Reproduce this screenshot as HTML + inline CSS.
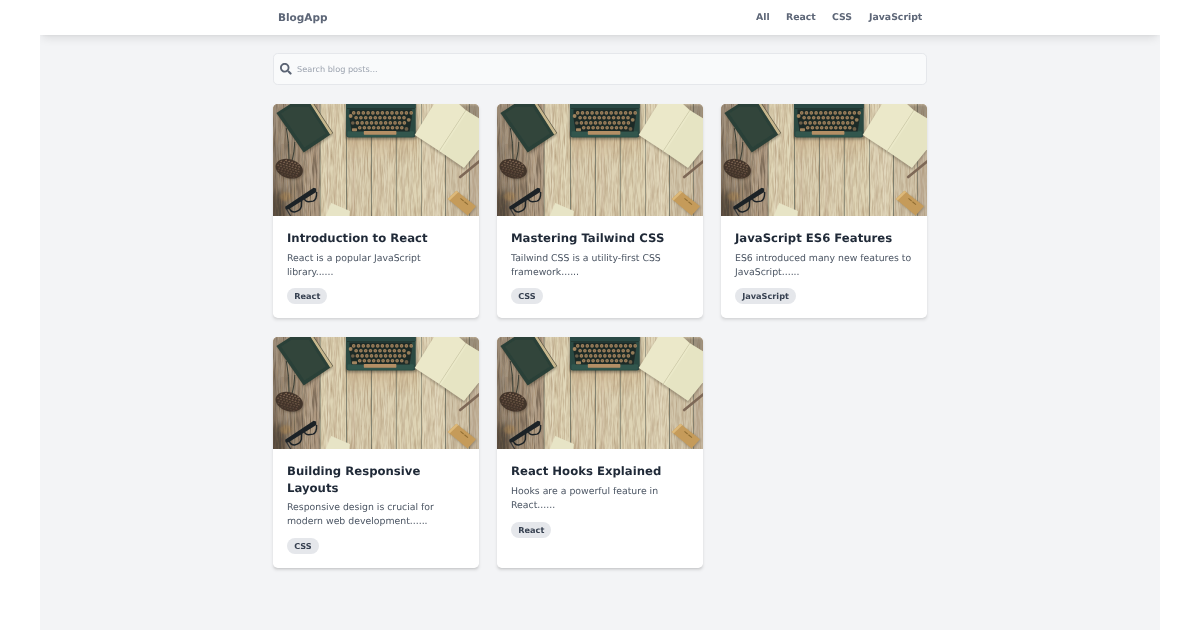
<!DOCTYPE html>
<html lang="en">
<head>
<meta charset="utf-8">
<title>BlogApp</title>
<style>
*{box-sizing:border-box;margin:0;padding:0}
html,body{width:1200px;height:630px;overflow:hidden;background:#fff}
body{font-family:"DejaVu Sans","Liberation Sans",sans-serif;position:relative;color:#1f2937;text-rendering:geometricPrecision}
.brand,.nav,.search span,.card h2,.card p,.tag{will-change:transform}
.bg{position:absolute;left:40px;top:0;width:1120px;height:630px;background:#f3f4f6;overflow:hidden}
.hdr{position:absolute;left:0;top:0;width:1120px;height:35px;background:#fff;box-shadow:0 5.8px 8.8px -1.75px rgba(0,0,0,.10),0 2.3px 3.5px -2.3px rgba(0,0,0,.10)}
.brand{position:absolute;left:238px;top:10.9px;font-size:10.51px;font-weight:700;color:#5d6677;line-height:14px}
.nav{position:absolute;top:11.7px;font-size:9.34px;font-weight:700;color:#5d6677;line-height:12px}
.search{position:absolute;left:273px;top:53px;width:654px;height:32px;background:#f9fafb;border:1px solid #e5e7eb;border-radius:4.7px}
.search span{position:absolute;left:23.2px;top:8.9px;font-size:8.18px;color:#9ca3af;line-height:12px}
.search svg{position:absolute;left:6.2px;top:9.3px}
.card{position:absolute;width:206px;background:#fff;border-radius:4.7px;overflow:hidden;box-shadow:0 2.3px 3.5px -0.6px rgba(0,0,0,.10),0 1.2px 2.3px -1.2px rgba(0,0,0,.10)}
.card .img{width:206px;height:112px;display:block;background:#b9a68c}
.card h2{position:absolute;left:14.4px;top:126.2px;font-size:11.68px;font-weight:700;color:#1f2937;line-height:16.5px;width:180px}
.card p{position:absolute;left:14.4px;font-size:9.34px;color:#4b5563;line-height:14px;width:180px}
.tag{position:absolute;left:14.3px;height:16px;border-radius:8px;background:#e5e7eb;font-size:8.18px;font-weight:700;color:#374151;line-height:16.6px;padding:0 7.2px}
</style>
</head>
<body>
<div class="bg">
<div class="hdr">
  <div class="brand">BlogApp</div>
  <div class="nav" style="left:716px">All</div>
  <div class="nav" style="left:746px">React</div>
  <div class="nav" style="left:792px">CSS</div>
  <div class="nav" style="left:828.5px">JavaScript</div>
</div>
</div>
<div class="search">
  <svg width="11.7" height="11.7" viewBox="0 0 512 512"><path fill="#5a6373" d="M505 442.7L405.3 343c-4.500-4.500-10.600-7-17-7H372c27.600-35.300 44-79.700 44-128C416 93.100 322.900 0 208 0S0 93.100 0 208s93.100 208 208 208c48.300 0 92.700-16.400 128-44v16.300c0 6.400 2.500 12.500 7 17l99.700 99.700c9.400 9.400 24.600 9.400 33.900 0l28.300-28.300c9.400-9.400 9.400-24.600.1-34zM208 336c-70.700 0-128-57.200-128-128 0-70.700 57.200-128 128-128 70.700 0 128 57.200 128 128 0 70.700-57.200 128-128 128z"/></svg>
  <span>Search blog posts...</span>
</div>

<div class="card" style="left:273px;top:104px;height:214px">
  <svg class="img" width="206" height="112" viewBox="0 0 206 112" preserveAspectRatio="none" aria-hidden="true"><filter id="g1" x="0" y="0" width="100%" height="100%" color-interpolation-filters="sRGB"><feTurbulence type="fractalNoise" baseFrequency="0.7 0.05" numOctaves="3" seed="4" result="n"/><feColorMatrix in="n" type="matrix" values="0 0 0 0 0.62  0 0 0 0 0.51  0 0 0 0 0.38  0.8 0.8 0 0 -0.66"/></filter><filter id="h1" x="0" y="0" width="100%" height="100%" color-interpolation-filters="sRGB"><feTurbulence type="fractalNoise" baseFrequency="0.6 0.04" numOctaves="3" seed="11" result="n"/><feColorMatrix in="n" type="matrix" values="0 0 0 0 0.33  0 0 0 0 0.27  0 0 0 0 0.21  1.1 1.1 0 0 -1.0"/></filter><filter id="b1" x="-5%" y="-5%" width="110%" height="110%"><feGaussianBlur stdDeviation="0.45"/></filter><filter id="s1" x="-20%" y="-20%" width="140%" height="140%"><feGaussianBlur stdDeviation="1.1"/></filter><filter id="t1" x="-60%" y="-60%" width="220%" height="220%"><feGaussianBlur stdDeviation="3.5"/></filter><g filter="url(#b1)"><rect x="-3.5" y="0" width="25.0" height="112" fill="#ad9e8a"/><rect x="21.3" y="0" width="26.0" height="112" fill="#bba891"/><rect x="47.1" y="0" width="26.5" height="112" fill="#dfd5b6"/><rect x="73.4" y="0" width="25.1" height="112" fill="#dacfb1"/><rect x="98.3" y="0" width="25.1" height="112" fill="#ddd2b4"/><rect x="123.2" y="0" width="25.0" height="112" fill="#ded4b5"/><rect x="148" y="0" width="24.6" height="112" fill="#e0d6b9"/><rect x="172.4" y="0" width="24.2" height="112" fill="#d2c6ab"/><rect x="196.4" y="0" width="24.8" height="112" fill="#c6b8a1"/><rect x="1" y="0" width="2.2" height="112" fill="#857563" opacity="0.4"/><rect x="11" y="0" width="1.5" height="112" fill="#7f6f5e" opacity="0.35"/><rect x="19" y="0" width="1.5" height="112" fill="#85745f" opacity="0.3"/><rect x="5" y="30" width="2" height="82" fill="#b3a48f" opacity="0.35"/><rect x="8" y="40" width="3" height="72" fill="#8f7b66" opacity="0.3"/><rect x="14" y="0" width="2" height="60" fill="#b5a691" opacity="0.35"/><rect x="17" y="50" width="2.5" height="62" fill="#93826e" opacity="0.3"/><rect x="21.5" y="40" width="8" height="72" fill="#a08e78" opacity="0.45"/><rect x="24" y="0" width="2.5" height="112" fill="#a99780" opacity="0.4"/><rect x="31" y="30" width="2.5" height="82" fill="#c9bba1" opacity="0.4"/><rect x="36" y="0" width="2" height="112" fill="#c5b69d" opacity="0.4"/><rect x="41" y="0" width="3" height="112" fill="#b39e86" opacity="0.4"/><rect x="53" y="0" width="4" height="112" fill="#e3dabf" opacity="0.5"/><rect x="61" y="0" width="2.5" height="112" fill="#cdb99e" opacity="0.4"/><rect x="67" y="20" width="2" height="92" fill="#e3dbc0" opacity="0.4"/><rect x="79" y="30" width="3" height="82" fill="#ccb9a0" opacity="0.4"/><rect x="87" y="0" width="3.5" height="112" fill="#e0d7bc" opacity="0.45"/><rect x="104" y="34" width="3" height="78" fill="#cfbda3" opacity="0.35"/><rect x="111" y="34" width="3" height="78" fill="#e1d8be" opacity="0.4"/><rect x="129" y="34" width="3" height="78" fill="#cfbea4" opacity="0.35"/><rect x="137" y="0" width="3" height="112" fill="#e2d9c0" opacity="0.4"/><rect x="154" y="40" width="3" height="72" fill="#cfbfa6" opacity="0.3"/><rect x="162" y="50" width="3" height="62" fill="#e2dac2" opacity="0.35"/><rect x="179" y="60" width="3" height="52" fill="#c5b69f" opacity="0.35"/><rect x="187" y="70" width="2.5" height="42" fill="#dcd2ba" opacity="0.35"/><rect x="199" y="50" width="3" height="62" fill="#bbad98" opacity="0.4"/><linearGradient id="d1" x1="0" y1="0" x2="0" y2="1"><stop offset="0" stop-color="#6b5a49" stop-opacity=".04"/><stop offset="1" stop-color="#6b5a49" stop-opacity=".26"/></linearGradient><rect x="0" y="0" width="30" height="112" fill="url(#d1)"/><rect x="30" y="0" width="17" height="112" fill="url(#d1)" opacity=".5"/><ellipse cx="4" cy="106" rx="9" ry="20" fill="#40392e" opacity=".85" filter="url(#t1)"/><ellipse cx="13" cy="92.5" rx="6" ry="4.5" fill="#b08a55" opacity=".6" filter="url(#s1)"/><ellipse cx="1" cy="70" rx="4" ry="40" fill="#5f5247" opacity=".5" filter="url(#t1)"/><linearGradient id="w1" x1="0" y1="0" x2="0" y2="1"><stop offset="0" stop-color="#bf9b6c" stop-opacity=".45"/><stop offset="1" stop-color="#bf9b6c" stop-opacity="0"/></linearGradient><rect x="72" y="28" width="72" height="30" fill="url(#w1)" filter="url(#s1)"/><rect x="0" y="0" width="206" height="112" filter="url(#g1)"/><rect x="0" y="0" width="47" height="112" filter="url(#h1)"/><rect x="21.00" y="0" width="0.6" height="112" fill="#3d4942" opacity="0.4"/><rect x="29.05" y="0" width="0.5" height="112" fill="#3d4942" opacity="0.25"/><rect x="46.80" y="0" width="0.6" height="112" fill="#3d4942" opacity="0.85"/><rect x="73.10" y="0" width="0.6" height="112" fill="#3d4942" opacity="0.9"/><rect x="98.00" y="0" width="0.6" height="112" fill="#3d4942" opacity="0.9"/><rect x="122.90" y="0" width="0.6" height="112" fill="#3d4942" opacity="0.85"/><rect x="148.10" y="0" width="0.6" height="112" fill="#3d4942" opacity="0.7"/><rect x="172.10" y="0" width="0.6" height="112" fill="#3d4942" opacity="0.9"/><rect x="196.10" y="0" width="0.6" height="112" fill="#3d4942" opacity="0.7"/><path d="M13.3 24 Q16.5 40 16 55" fill="none" stroke="#343a31" stroke-width="1" opacity=".95"/><path d="M21.8 38 Q21.5 48 19 57" fill="none" stroke="#343a31" stroke-width="1" opacity=".9"/><polygon points="5,11 19,2 39,1 60,31 32,50" fill="#3a3225" opacity=".35" filter="url(#s1)"/><polygon points="37.2,0 41.2,0 60.2,29 57,31.2" fill="#5b5645"/><polygon points="37.2,0 40.4,0 59.4,29 57,31" fill="#c8b88e"/><polygon points="3.4,8.9 17.3,0 37.6,0 57.2,30.8 30.7,48.4" fill="#2c4037"/><polygon points="8,9.5 18,3 36,3 53,29.5 31.5,43.5" fill="#32473d" opacity=".7"/><rect x="72.5" y="-2" width="71" height="37.5" rx="2.5" fill="#2a2f28" opacity=".4" filter="url(#s1)"/><rect x="73" y="-4" width="69.7" height="37.6" rx="3" fill="#2b4843"/><rect x="73" y="-3" width="69.7" height="7" fill="#2b4a44"/><rect x="74" y="4" width="67.7" height="1" fill="#223833"/><rect x="74.5" y="27.3" width="66.4" height="5.4" rx="1.2" fill="#31564e"/><path d="M76.5 5.6 H138.8 V14 L136.6 27.6 H78.6 L76.5 14 Z" fill="#1f2a27"/><rect x="90.8" y="27.1" width="32.6" height="3.6" rx=".6" fill="#b48f65"/><circle cx="80.7" cy="8.9" r="1.8" fill="#a0845f"/><circle cx="80.7" cy="8.9" r=".8" fill="#5c4a35" opacity=".5"/><circle cx="85.5" cy="8.9" r="1.8" fill="#a0845f"/><circle cx="85.5" cy="8.9" r=".8" fill="#5c4a35" opacity=".5"/><circle cx="90.3" cy="8.9" r="1.8" fill="#a0845f"/><circle cx="90.3" cy="8.9" r=".8" fill="#5c4a35" opacity=".5"/><circle cx="95.1" cy="8.9" r="1.8" fill="#a0845f"/><circle cx="95.1" cy="8.9" r=".8" fill="#5c4a35" opacity=".5"/><circle cx="99.9" cy="8.9" r="1.8" fill="#a0845f"/><circle cx="99.9" cy="8.9" r=".8" fill="#5c4a35" opacity=".5"/><circle cx="104.7" cy="8.9" r="1.8" fill="#a0845f"/><circle cx="104.7" cy="8.9" r=".8" fill="#5c4a35" opacity=".5"/><circle cx="109.4" cy="8.9" r="1.8" fill="#a0845f"/><circle cx="109.4" cy="8.9" r=".8" fill="#5c4a35" opacity=".5"/><circle cx="114.2" cy="8.9" r="1.8" fill="#a0845f"/><circle cx="114.2" cy="8.9" r=".8" fill="#5c4a35" opacity=".5"/><circle cx="119.0" cy="8.9" r="1.8" fill="#a0845f"/><circle cx="119.0" cy="8.9" r=".8" fill="#5c4a35" opacity=".5"/><circle cx="123.8" cy="8.9" r="1.8" fill="#a0845f"/><circle cx="123.8" cy="8.9" r=".8" fill="#5c4a35" opacity=".5"/><circle cx="128.6" cy="8.9" r="1.8" fill="#a0845f"/><circle cx="128.6" cy="8.9" r=".8" fill="#5c4a35" opacity=".5"/><circle cx="133.4" cy="8.9" r="1.8" fill="#a0845f"/><circle cx="133.4" cy="8.9" r=".8" fill="#5c4a35" opacity=".5"/><circle cx="138.2" cy="8.9" r="1.8" fill="#a0845f"/><circle cx="138.2" cy="8.9" r=".8" fill="#5c4a35" opacity=".5"/><circle cx="83.1" cy="13.8" r="1.8" fill="#a0845f"/><circle cx="83.1" cy="13.8" r=".8" fill="#5c4a35" opacity=".5"/><circle cx="87.9" cy="13.8" r="1.8" fill="#a0845f"/><circle cx="87.9" cy="13.8" r=".8" fill="#5c4a35" opacity=".5"/><circle cx="92.7" cy="13.8" r="1.8" fill="#a0845f"/><circle cx="92.7" cy="13.8" r=".8" fill="#5c4a35" opacity=".5"/><circle cx="97.5" cy="13.8" r="1.8" fill="#a0845f"/><circle cx="97.5" cy="13.8" r=".8" fill="#5c4a35" opacity=".5"/><circle cx="102.3" cy="13.8" r="1.8" fill="#a0845f"/><circle cx="102.3" cy="13.8" r=".8" fill="#5c4a35" opacity=".5"/><circle cx="107.0" cy="13.8" r="1.8" fill="#a0845f"/><circle cx="107.0" cy="13.8" r=".8" fill="#5c4a35" opacity=".5"/><circle cx="111.8" cy="13.8" r="1.8" fill="#a0845f"/><circle cx="111.8" cy="13.8" r=".8" fill="#5c4a35" opacity=".5"/><circle cx="116.6" cy="13.8" r="1.8" fill="#a0845f"/><circle cx="116.6" cy="13.8" r=".8" fill="#5c4a35" opacity=".5"/><circle cx="121.4" cy="13.8" r="1.8" fill="#a0845f"/><circle cx="121.4" cy="13.8" r=".8" fill="#5c4a35" opacity=".5"/><circle cx="126.2" cy="13.8" r="1.8" fill="#a0845f"/><circle cx="126.2" cy="13.8" r=".8" fill="#5c4a35" opacity=".5"/><circle cx="131.0" cy="13.8" r="1.8" fill="#a0845f"/><circle cx="131.0" cy="13.8" r=".8" fill="#5c4a35" opacity=".5"/><circle cx="84.4" cy="18.9" r="1.8" fill="#a0845f"/><circle cx="84.4" cy="18.9" r=".8" fill="#5c4a35" opacity=".5"/><circle cx="89.1" cy="18.9" r="1.8" fill="#a0845f"/><circle cx="89.1" cy="18.9" r=".8" fill="#5c4a35" opacity=".5"/><circle cx="93.8" cy="18.9" r="1.8" fill="#a0845f"/><circle cx="93.8" cy="18.9" r=".8" fill="#5c4a35" opacity=".5"/><circle cx="98.5" cy="18.9" r="1.8" fill="#a0845f"/><circle cx="98.5" cy="18.9" r=".8" fill="#5c4a35" opacity=".5"/><circle cx="103.2" cy="18.9" r="1.8" fill="#a0845f"/><circle cx="103.2" cy="18.9" r=".8" fill="#5c4a35" opacity=".5"/><circle cx="107.9" cy="18.9" r="1.8" fill="#a0845f"/><circle cx="107.9" cy="18.9" r=".8" fill="#5c4a35" opacity=".5"/><circle cx="112.6" cy="18.9" r="1.8" fill="#a0845f"/><circle cx="112.6" cy="18.9" r=".8" fill="#5c4a35" opacity=".5"/><circle cx="117.3" cy="18.9" r="1.8" fill="#a0845f"/><circle cx="117.3" cy="18.9" r=".8" fill="#5c4a35" opacity=".5"/><circle cx="122.0" cy="18.9" r="1.8" fill="#a0845f"/><circle cx="122.0" cy="18.9" r=".8" fill="#5c4a35" opacity=".5"/><circle cx="126.7" cy="18.9" r="1.8" fill="#a0845f"/><circle cx="126.7" cy="18.9" r=".8" fill="#5c4a35" opacity=".5"/><circle cx="131.4" cy="18.9" r="1.8" fill="#a0845f"/><circle cx="131.4" cy="18.9" r=".8" fill="#5c4a35" opacity=".5"/><circle cx="86.7" cy="23.8" r="1.8" fill="#a0845f"/><circle cx="86.7" cy="23.8" r=".8" fill="#5c4a35" opacity=".5"/><circle cx="91.4" cy="23.8" r="1.8" fill="#a0845f"/><circle cx="91.4" cy="23.8" r=".8" fill="#5c4a35" opacity=".5"/><circle cx="96.1" cy="23.8" r="1.8" fill="#a0845f"/><circle cx="96.1" cy="23.8" r=".8" fill="#5c4a35" opacity=".5"/><circle cx="100.7" cy="23.8" r="1.8" fill="#a0845f"/><circle cx="100.7" cy="23.8" r=".8" fill="#5c4a35" opacity=".5"/><circle cx="105.4" cy="23.8" r="1.8" fill="#a0845f"/><circle cx="105.4" cy="23.8" r=".8" fill="#5c4a35" opacity=".5"/><circle cx="110.1" cy="23.8" r="1.8" fill="#a0845f"/><circle cx="110.1" cy="23.8" r=".8" fill="#5c4a35" opacity=".5"/><circle cx="114.8" cy="23.8" r="1.8" fill="#a0845f"/><circle cx="114.8" cy="23.8" r=".8" fill="#5c4a35" opacity=".5"/><circle cx="119.5" cy="23.8" r="1.8" fill="#a0845f"/><circle cx="119.5" cy="23.8" r=".8" fill="#5c4a35" opacity=".5"/><circle cx="124.1" cy="23.8" r="1.8" fill="#a0845f"/><circle cx="124.1" cy="23.8" r=".8" fill="#5c4a35" opacity=".5"/><circle cx="128.8" cy="23.8" r="1.8" fill="#a0845f"/><circle cx="128.8" cy="23.8" r=".8" fill="#5c4a35" opacity=".5"/><circle cx="77.6" cy="12" r="1.9" fill="#a0845f"/><circle cx="135.7" cy="15.8" r="1.9" fill="#a0845f" opacity=".9"/><circle cx="79.8" cy="19" r="1.8" fill="#a0845f" opacity=".6"/><circle cx="133.5" cy="24.9" r="1.9" fill="#a0845f" opacity=".6"/><rect x="79" y="24.2" width="5" height="3" rx=".8" fill="#a0845f"/><polygon points="141.7,32 161,1 206,1 206,47 191,66 166,49" fill="#3a3225" opacity=".3" filter="url(#s1)"/><polygon points="141.7,31.1 160.9,0 186,0 192.9,6.2 166.2,47.1" fill="#ebe8c9"/><polygon points="192.9,6.2 206,14.2 206,45.3 191,64 166.2,47.1" fill="#e6e4c3"/><polygon points="192.9,6.2 194.6,7.3 167.8,48.2 166.2,47.1" fill="#efedd0" opacity=".5"/><line x1="192.9" y1="6.2" x2="166.2" y2="47.1" stroke="#c9c6a3" stroke-width=".5"/><line x1="187.2" y1="73" x2="207" y2="56.8" stroke="#7d6756" stroke-width="2.6" stroke-linecap="round"/><polygon points="184,88 176,96 195,113 204,103" fill="#3a3225" opacity=".3" filter="url(#s1)"/><polygon points="183.4,86.7 174.8,95.1 194.6,111.6 203,102.2" fill="#c59b5a"/><polygon points="183.4,86.7 174.8,95.1 176.6,96.6 185.2,88.2" fill="#ddb97a"/><g transform="translate(186.8,95.2) rotate(40)" fill="#7a5a22" opacity=".7"><rect x="0" y="-1.6" width="4.2" height="1.1"/><rect x="5.2" y="-1.6" width="4.6" height="1.1"/></g><ellipse cx="17" cy="66" rx="14" ry="9" fill="#2a2018" opacity=".35" filter="url(#s1)" transform="rotate(18 17 66)"/><ellipse cx="16.2" cy="64.7" rx="14" ry="9.4" fill="#43342a" transform="rotate(17 16.2 64.7)"/><g transform="rotate(17 16.2 64.7)"><path d="M9.5 58.3 L10.9 56.7 L12.2 58.3 Z" fill="#8f745d" opacity="0.85"/><path d="M12.6 58.3 L14.0 56.7 L15.3 58.3 Z" fill="#8f745d" opacity="0.85"/><path d="M15.7 58.3 L17.1 56.7 L18.4 58.3 Z" fill="#8f745d" opacity="0.85"/><path d="M18.8 58.3 L20.2 56.7 L21.5 58.3 Z" fill="#8f745d" opacity="0.85"/><path d="M21.9 58.3 L23.3 56.7 L24.6 58.3 Z" fill="#8f745d" opacity="0.85"/><path d="M5.1 60.6 L6.5 59.0 L7.8 60.6 Z" fill="#8f745d" opacity="0.75"/><path d="M8.2 60.6 L9.6 59.0 L10.9 60.6 Z" fill="#8f745d" opacity="0.75"/><path d="M11.3 60.6 L12.7 59.0 L14.0 60.6 Z" fill="#8f745d" opacity="0.75"/><path d="M14.4 60.6 L15.8 59.0 L17.1 60.6 Z" fill="#8f745d" opacity="0.75"/><path d="M17.5 60.6 L18.9 59.0 L20.2 60.6 Z" fill="#8f745d" opacity="0.75"/><path d="M20.6 60.6 L22.0 59.0 L23.3 60.6 Z" fill="#8f745d" opacity="0.75"/><path d="M23.7 60.6 L25.1 59.0 L26.4 60.6 Z" fill="#8f745d" opacity="0.75"/><path d="M5.2 63.0 L6.6 61.4 L7.9 63.0 Z" fill="#8f745d" opacity="0.65"/><path d="M8.3 63.0 L9.7 61.4 L11.0 63.0 Z" fill="#8f745d" opacity="0.65"/><path d="M11.4 63.0 L12.8 61.4 L14.1 63.0 Z" fill="#8f745d" opacity="0.65"/><path d="M14.5 63.0 L15.9 61.4 L17.2 63.0 Z" fill="#8f745d" opacity="0.65"/><path d="M17.6 63.0 L19.0 61.4 L20.3 63.0 Z" fill="#8f745d" opacity="0.65"/><path d="M20.7 63.0 L22.1 61.4 L23.4 63.0 Z" fill="#8f745d" opacity="0.65"/><path d="M23.8 63.0 L25.2 61.4 L26.5 63.0 Z" fill="#8f745d" opacity="0.65"/><path d="M3.2 65.3 L4.6 63.7 L5.9 65.3 Z" fill="#8f745d" opacity="0.55"/><path d="M6.3 65.3 L7.7 63.7 L9.0 65.3 Z" fill="#8f745d" opacity="0.55"/><path d="M9.5 65.3 L10.8 63.7 L12.2 65.3 Z" fill="#8f745d" opacity="0.55"/><path d="M12.6 65.3 L13.9 63.7 L15.2 65.3 Z" fill="#8f745d" opacity="0.55"/><path d="M15.7 65.3 L17.0 63.7 L18.4 65.3 Z" fill="#8f745d" opacity="0.55"/><path d="M18.8 65.3 L20.1 63.7 L21.5 65.3 Z" fill="#8f745d" opacity="0.55"/><path d="M21.9 65.3 L23.2 63.7 L24.6 65.3 Z" fill="#8f745d" opacity="0.55"/><path d="M24.9 65.3 L26.3 63.7 L27.6 65.3 Z" fill="#8f745d" opacity="0.55"/><path d="M5.2 67.6 L6.6 66.0 L7.9 67.6 Z" fill="#8f745d" opacity="0.45"/><path d="M8.3 67.6 L9.7 66.0 L11.0 67.6 Z" fill="#8f745d" opacity="0.45"/><path d="M11.4 67.6 L12.8 66.0 L14.1 67.6 Z" fill="#8f745d" opacity="0.45"/><path d="M14.5 67.6 L15.9 66.0 L17.2 67.6 Z" fill="#8f745d" opacity="0.45"/><path d="M17.6 67.6 L19.0 66.0 L20.3 67.6 Z" fill="#8f745d" opacity="0.45"/><path d="M20.7 67.6 L22.1 66.0 L23.4 67.6 Z" fill="#8f745d" opacity="0.45"/><path d="M23.8 67.6 L25.2 66.0 L26.5 67.6 Z" fill="#8f745d" opacity="0.45"/><path d="M5.1 70.0 L6.5 68.4 L7.8 70.0 Z" fill="#8f745d" opacity="0.35"/><path d="M8.2 70.0 L9.6 68.4 L10.9 70.0 Z" fill="#8f745d" opacity="0.35"/><path d="M11.3 70.0 L12.7 68.4 L14.0 70.0 Z" fill="#8f745d" opacity="0.35"/><path d="M14.4 70.0 L15.8 68.4 L17.1 70.0 Z" fill="#8f745d" opacity="0.35"/><path d="M17.5 70.0 L18.9 68.4 L20.2 70.0 Z" fill="#8f745d" opacity="0.35"/><path d="M20.6 70.0 L22.0 68.4 L23.3 70.0 Z" fill="#8f745d" opacity="0.35"/><path d="M23.7 70.0 L25.1 68.4 L26.4 70.0 Z" fill="#8f745d" opacity="0.35"/><path d="M9.5 72.3 L10.9 70.8 L12.2 72.3 Z" fill="#8f745d" opacity="0.25"/><path d="M12.6 72.3 L14.0 70.8 L15.3 72.3 Z" fill="#8f745d" opacity="0.25"/><path d="M15.7 72.3 L17.1 70.8 L18.4 72.3 Z" fill="#8f745d" opacity="0.25"/><path d="M18.8 72.3 L20.2 70.8 L21.5 72.3 Z" fill="#8f745d" opacity="0.25"/><path d="M21.9 72.3 L23.3 70.8 L24.6 72.3 Z" fill="#8f745d" opacity="0.25"/></g><polygon points="12.1,102.8 40.6,83.7 43.1,84.6 43.3,88 15.2,105.5 12.6,105.2" fill="#1c2327"/><g fill="none" stroke="#1c2327" stroke-linejoin="round"><path d="M31.2 93 Q31.4 97.6 35.5 97.7 L40 97.1 Q43.9 95.8 43.6 88" stroke-width="1.45"/><path d="M16.4 104 Q17.4 108 21.6 108 Q27.4 106.8 28.4 102.4 L28.5 96.5" stroke-width="1.45"/><path d="M13.2 104.5 L17.6 112" stroke-width="1.3" opacity=".75"/></g><polygon points="58.2,99.1 76.9,107.1 76.4,113 52.4,113" fill="#e7e4c6"/></g></svg>
  <h2>Introduction to React</h2>
  <p style="top:147.9px">React is a popular JavaScript library......</p>
  <div class="tag" style="top:184.3px">React</div>
</div>
<div class="card" style="left:497px;top:104px;height:214px">
  <svg class="img" width="206" height="112" viewBox="0 0 206 112" preserveAspectRatio="none" aria-hidden="true"><filter id="g2" x="0" y="0" width="100%" height="100%" color-interpolation-filters="sRGB"><feTurbulence type="fractalNoise" baseFrequency="0.7 0.05" numOctaves="3" seed="4" result="n"/><feColorMatrix in="n" type="matrix" values="0 0 0 0 0.62  0 0 0 0 0.51  0 0 0 0 0.38  0.8 0.8 0 0 -0.66"/></filter><filter id="h2" x="0" y="0" width="100%" height="100%" color-interpolation-filters="sRGB"><feTurbulence type="fractalNoise" baseFrequency="0.6 0.04" numOctaves="3" seed="11" result="n"/><feColorMatrix in="n" type="matrix" values="0 0 0 0 0.33  0 0 0 0 0.27  0 0 0 0 0.21  1.1 1.1 0 0 -1.0"/></filter><filter id="b2" x="-5%" y="-5%" width="110%" height="110%"><feGaussianBlur stdDeviation="0.45"/></filter><filter id="s2" x="-20%" y="-20%" width="140%" height="140%"><feGaussianBlur stdDeviation="1.1"/></filter><filter id="t2" x="-60%" y="-60%" width="220%" height="220%"><feGaussianBlur stdDeviation="3.5"/></filter><g filter="url(#b2)"><rect x="-3.5" y="0" width="25.0" height="112" fill="#ad9e8a"/><rect x="21.3" y="0" width="26.0" height="112" fill="#bba891"/><rect x="47.1" y="0" width="26.5" height="112" fill="#dfd5b6"/><rect x="73.4" y="0" width="25.1" height="112" fill="#dacfb1"/><rect x="98.3" y="0" width="25.1" height="112" fill="#ddd2b4"/><rect x="123.2" y="0" width="25.0" height="112" fill="#ded4b5"/><rect x="148" y="0" width="24.6" height="112" fill="#e0d6b9"/><rect x="172.4" y="0" width="24.2" height="112" fill="#d2c6ab"/><rect x="196.4" y="0" width="24.8" height="112" fill="#c6b8a1"/><rect x="1" y="0" width="2.2" height="112" fill="#857563" opacity="0.4"/><rect x="11" y="0" width="1.5" height="112" fill="#7f6f5e" opacity="0.35"/><rect x="19" y="0" width="1.5" height="112" fill="#85745f" opacity="0.3"/><rect x="5" y="30" width="2" height="82" fill="#b3a48f" opacity="0.35"/><rect x="8" y="40" width="3" height="72" fill="#8f7b66" opacity="0.3"/><rect x="14" y="0" width="2" height="60" fill="#b5a691" opacity="0.35"/><rect x="17" y="50" width="2.5" height="62" fill="#93826e" opacity="0.3"/><rect x="21.5" y="40" width="8" height="72" fill="#a08e78" opacity="0.45"/><rect x="24" y="0" width="2.5" height="112" fill="#a99780" opacity="0.4"/><rect x="31" y="30" width="2.5" height="82" fill="#c9bba1" opacity="0.4"/><rect x="36" y="0" width="2" height="112" fill="#c5b69d" opacity="0.4"/><rect x="41" y="0" width="3" height="112" fill="#b39e86" opacity="0.4"/><rect x="53" y="0" width="4" height="112" fill="#e3dabf" opacity="0.5"/><rect x="61" y="0" width="2.5" height="112" fill="#cdb99e" opacity="0.4"/><rect x="67" y="20" width="2" height="92" fill="#e3dbc0" opacity="0.4"/><rect x="79" y="30" width="3" height="82" fill="#ccb9a0" opacity="0.4"/><rect x="87" y="0" width="3.5" height="112" fill="#e0d7bc" opacity="0.45"/><rect x="104" y="34" width="3" height="78" fill="#cfbda3" opacity="0.35"/><rect x="111" y="34" width="3" height="78" fill="#e1d8be" opacity="0.4"/><rect x="129" y="34" width="3" height="78" fill="#cfbea4" opacity="0.35"/><rect x="137" y="0" width="3" height="112" fill="#e2d9c0" opacity="0.4"/><rect x="154" y="40" width="3" height="72" fill="#cfbfa6" opacity="0.3"/><rect x="162" y="50" width="3" height="62" fill="#e2dac2" opacity="0.35"/><rect x="179" y="60" width="3" height="52" fill="#c5b69f" opacity="0.35"/><rect x="187" y="70" width="2.5" height="42" fill="#dcd2ba" opacity="0.35"/><rect x="199" y="50" width="3" height="62" fill="#bbad98" opacity="0.4"/><linearGradient id="d2" x1="0" y1="0" x2="0" y2="1"><stop offset="0" stop-color="#6b5a49" stop-opacity=".04"/><stop offset="1" stop-color="#6b5a49" stop-opacity=".26"/></linearGradient><rect x="0" y="0" width="30" height="112" fill="url(#d2)"/><rect x="30" y="0" width="17" height="112" fill="url(#d2)" opacity=".5"/><ellipse cx="4" cy="106" rx="9" ry="20" fill="#40392e" opacity=".85" filter="url(#t2)"/><ellipse cx="13" cy="92.5" rx="6" ry="4.5" fill="#b08a55" opacity=".6" filter="url(#s2)"/><ellipse cx="1" cy="70" rx="4" ry="40" fill="#5f5247" opacity=".5" filter="url(#t2)"/><linearGradient id="w2" x1="0" y1="0" x2="0" y2="1"><stop offset="0" stop-color="#bf9b6c" stop-opacity=".45"/><stop offset="1" stop-color="#bf9b6c" stop-opacity="0"/></linearGradient><rect x="72" y="28" width="72" height="30" fill="url(#w2)" filter="url(#s2)"/><rect x="0" y="0" width="206" height="112" filter="url(#g2)"/><rect x="0" y="0" width="47" height="112" filter="url(#h2)"/><rect x="21.00" y="0" width="0.6" height="112" fill="#3d4942" opacity="0.4"/><rect x="29.05" y="0" width="0.5" height="112" fill="#3d4942" opacity="0.25"/><rect x="46.80" y="0" width="0.6" height="112" fill="#3d4942" opacity="0.85"/><rect x="73.10" y="0" width="0.6" height="112" fill="#3d4942" opacity="0.9"/><rect x="98.00" y="0" width="0.6" height="112" fill="#3d4942" opacity="0.9"/><rect x="122.90" y="0" width="0.6" height="112" fill="#3d4942" opacity="0.85"/><rect x="148.10" y="0" width="0.6" height="112" fill="#3d4942" opacity="0.7"/><rect x="172.10" y="0" width="0.6" height="112" fill="#3d4942" opacity="0.9"/><rect x="196.10" y="0" width="0.6" height="112" fill="#3d4942" opacity="0.7"/><path d="M13.3 24 Q16.5 40 16 55" fill="none" stroke="#343a31" stroke-width="1" opacity=".95"/><path d="M21.8 38 Q21.5 48 19 57" fill="none" stroke="#343a31" stroke-width="1" opacity=".9"/><polygon points="5,11 19,2 39,1 60,31 32,50" fill="#3a3225" opacity=".35" filter="url(#s2)"/><polygon points="37.2,0 41.2,0 60.2,29 57,31.2" fill="#5b5645"/><polygon points="37.2,0 40.4,0 59.4,29 57,31" fill="#c8b88e"/><polygon points="3.4,8.9 17.3,0 37.6,0 57.2,30.8 30.7,48.4" fill="#2c4037"/><polygon points="8,9.5 18,3 36,3 53,29.5 31.5,43.5" fill="#32473d" opacity=".7"/><rect x="72.5" y="-2" width="71" height="37.5" rx="2.5" fill="#2a2f28" opacity=".4" filter="url(#s2)"/><rect x="73" y="-4" width="69.7" height="37.6" rx="3" fill="#2b4843"/><rect x="73" y="-3" width="69.7" height="7" fill="#2b4a44"/><rect x="74" y="4" width="67.7" height="1" fill="#223833"/><rect x="74.5" y="27.3" width="66.4" height="5.4" rx="1.2" fill="#31564e"/><path d="M76.5 5.6 H138.8 V14 L136.6 27.6 H78.6 L76.5 14 Z" fill="#1f2a27"/><rect x="90.8" y="27.1" width="32.6" height="3.6" rx=".6" fill="#b48f65"/><circle cx="80.7" cy="8.9" r="1.8" fill="#a0845f"/><circle cx="80.7" cy="8.9" r=".8" fill="#5c4a35" opacity=".5"/><circle cx="85.5" cy="8.9" r="1.8" fill="#a0845f"/><circle cx="85.5" cy="8.9" r=".8" fill="#5c4a35" opacity=".5"/><circle cx="90.3" cy="8.9" r="1.8" fill="#a0845f"/><circle cx="90.3" cy="8.9" r=".8" fill="#5c4a35" opacity=".5"/><circle cx="95.1" cy="8.9" r="1.8" fill="#a0845f"/><circle cx="95.1" cy="8.9" r=".8" fill="#5c4a35" opacity=".5"/><circle cx="99.9" cy="8.9" r="1.8" fill="#a0845f"/><circle cx="99.9" cy="8.9" r=".8" fill="#5c4a35" opacity=".5"/><circle cx="104.7" cy="8.9" r="1.8" fill="#a0845f"/><circle cx="104.7" cy="8.9" r=".8" fill="#5c4a35" opacity=".5"/><circle cx="109.4" cy="8.9" r="1.8" fill="#a0845f"/><circle cx="109.4" cy="8.9" r=".8" fill="#5c4a35" opacity=".5"/><circle cx="114.2" cy="8.9" r="1.8" fill="#a0845f"/><circle cx="114.2" cy="8.9" r=".8" fill="#5c4a35" opacity=".5"/><circle cx="119.0" cy="8.9" r="1.8" fill="#a0845f"/><circle cx="119.0" cy="8.9" r=".8" fill="#5c4a35" opacity=".5"/><circle cx="123.8" cy="8.9" r="1.8" fill="#a0845f"/><circle cx="123.8" cy="8.9" r=".8" fill="#5c4a35" opacity=".5"/><circle cx="128.6" cy="8.9" r="1.8" fill="#a0845f"/><circle cx="128.6" cy="8.9" r=".8" fill="#5c4a35" opacity=".5"/><circle cx="133.4" cy="8.9" r="1.8" fill="#a0845f"/><circle cx="133.4" cy="8.9" r=".8" fill="#5c4a35" opacity=".5"/><circle cx="138.2" cy="8.9" r="1.8" fill="#a0845f"/><circle cx="138.2" cy="8.9" r=".8" fill="#5c4a35" opacity=".5"/><circle cx="83.1" cy="13.8" r="1.8" fill="#a0845f"/><circle cx="83.1" cy="13.8" r=".8" fill="#5c4a35" opacity=".5"/><circle cx="87.9" cy="13.8" r="1.8" fill="#a0845f"/><circle cx="87.9" cy="13.8" r=".8" fill="#5c4a35" opacity=".5"/><circle cx="92.7" cy="13.8" r="1.8" fill="#a0845f"/><circle cx="92.7" cy="13.8" r=".8" fill="#5c4a35" opacity=".5"/><circle cx="97.5" cy="13.8" r="1.8" fill="#a0845f"/><circle cx="97.5" cy="13.8" r=".8" fill="#5c4a35" opacity=".5"/><circle cx="102.3" cy="13.8" r="1.8" fill="#a0845f"/><circle cx="102.3" cy="13.8" r=".8" fill="#5c4a35" opacity=".5"/><circle cx="107.0" cy="13.8" r="1.8" fill="#a0845f"/><circle cx="107.0" cy="13.8" r=".8" fill="#5c4a35" opacity=".5"/><circle cx="111.8" cy="13.8" r="1.8" fill="#a0845f"/><circle cx="111.8" cy="13.8" r=".8" fill="#5c4a35" opacity=".5"/><circle cx="116.6" cy="13.8" r="1.8" fill="#a0845f"/><circle cx="116.6" cy="13.8" r=".8" fill="#5c4a35" opacity=".5"/><circle cx="121.4" cy="13.8" r="1.8" fill="#a0845f"/><circle cx="121.4" cy="13.8" r=".8" fill="#5c4a35" opacity=".5"/><circle cx="126.2" cy="13.8" r="1.8" fill="#a0845f"/><circle cx="126.2" cy="13.8" r=".8" fill="#5c4a35" opacity=".5"/><circle cx="131.0" cy="13.8" r="1.8" fill="#a0845f"/><circle cx="131.0" cy="13.8" r=".8" fill="#5c4a35" opacity=".5"/><circle cx="84.4" cy="18.9" r="1.8" fill="#a0845f"/><circle cx="84.4" cy="18.9" r=".8" fill="#5c4a35" opacity=".5"/><circle cx="89.1" cy="18.9" r="1.8" fill="#a0845f"/><circle cx="89.1" cy="18.9" r=".8" fill="#5c4a35" opacity=".5"/><circle cx="93.8" cy="18.9" r="1.8" fill="#a0845f"/><circle cx="93.8" cy="18.9" r=".8" fill="#5c4a35" opacity=".5"/><circle cx="98.5" cy="18.9" r="1.8" fill="#a0845f"/><circle cx="98.5" cy="18.9" r=".8" fill="#5c4a35" opacity=".5"/><circle cx="103.2" cy="18.9" r="1.8" fill="#a0845f"/><circle cx="103.2" cy="18.9" r=".8" fill="#5c4a35" opacity=".5"/><circle cx="107.9" cy="18.9" r="1.8" fill="#a0845f"/><circle cx="107.9" cy="18.9" r=".8" fill="#5c4a35" opacity=".5"/><circle cx="112.6" cy="18.9" r="1.8" fill="#a0845f"/><circle cx="112.6" cy="18.9" r=".8" fill="#5c4a35" opacity=".5"/><circle cx="117.3" cy="18.9" r="1.8" fill="#a0845f"/><circle cx="117.3" cy="18.9" r=".8" fill="#5c4a35" opacity=".5"/><circle cx="122.0" cy="18.9" r="1.8" fill="#a0845f"/><circle cx="122.0" cy="18.9" r=".8" fill="#5c4a35" opacity=".5"/><circle cx="126.7" cy="18.9" r="1.8" fill="#a0845f"/><circle cx="126.7" cy="18.9" r=".8" fill="#5c4a35" opacity=".5"/><circle cx="131.4" cy="18.9" r="1.8" fill="#a0845f"/><circle cx="131.4" cy="18.9" r=".8" fill="#5c4a35" opacity=".5"/><circle cx="86.7" cy="23.8" r="1.8" fill="#a0845f"/><circle cx="86.7" cy="23.8" r=".8" fill="#5c4a35" opacity=".5"/><circle cx="91.4" cy="23.8" r="1.8" fill="#a0845f"/><circle cx="91.4" cy="23.8" r=".8" fill="#5c4a35" opacity=".5"/><circle cx="96.1" cy="23.8" r="1.8" fill="#a0845f"/><circle cx="96.1" cy="23.8" r=".8" fill="#5c4a35" opacity=".5"/><circle cx="100.7" cy="23.8" r="1.8" fill="#a0845f"/><circle cx="100.7" cy="23.8" r=".8" fill="#5c4a35" opacity=".5"/><circle cx="105.4" cy="23.8" r="1.8" fill="#a0845f"/><circle cx="105.4" cy="23.8" r=".8" fill="#5c4a35" opacity=".5"/><circle cx="110.1" cy="23.8" r="1.8" fill="#a0845f"/><circle cx="110.1" cy="23.8" r=".8" fill="#5c4a35" opacity=".5"/><circle cx="114.8" cy="23.8" r="1.8" fill="#a0845f"/><circle cx="114.8" cy="23.8" r=".8" fill="#5c4a35" opacity=".5"/><circle cx="119.5" cy="23.8" r="1.8" fill="#a0845f"/><circle cx="119.5" cy="23.8" r=".8" fill="#5c4a35" opacity=".5"/><circle cx="124.1" cy="23.8" r="1.8" fill="#a0845f"/><circle cx="124.1" cy="23.8" r=".8" fill="#5c4a35" opacity=".5"/><circle cx="128.8" cy="23.8" r="1.8" fill="#a0845f"/><circle cx="128.8" cy="23.8" r=".8" fill="#5c4a35" opacity=".5"/><circle cx="77.6" cy="12" r="1.9" fill="#a0845f"/><circle cx="135.7" cy="15.8" r="1.9" fill="#a0845f" opacity=".9"/><circle cx="79.8" cy="19" r="1.8" fill="#a0845f" opacity=".6"/><circle cx="133.5" cy="24.9" r="1.9" fill="#a0845f" opacity=".6"/><rect x="79" y="24.2" width="5" height="3" rx=".8" fill="#a0845f"/><polygon points="141.7,32 161,1 206,1 206,47 191,66 166,49" fill="#3a3225" opacity=".3" filter="url(#s2)"/><polygon points="141.7,31.1 160.9,0 186,0 192.9,6.2 166.2,47.1" fill="#ebe8c9"/><polygon points="192.9,6.2 206,14.2 206,45.3 191,64 166.2,47.1" fill="#e6e4c3"/><polygon points="192.9,6.2 194.6,7.3 167.8,48.2 166.2,47.1" fill="#efedd0" opacity=".5"/><line x1="192.9" y1="6.2" x2="166.2" y2="47.1" stroke="#c9c6a3" stroke-width=".5"/><line x1="187.2" y1="73" x2="207" y2="56.8" stroke="#7d6756" stroke-width="2.6" stroke-linecap="round"/><polygon points="184,88 176,96 195,113 204,103" fill="#3a3225" opacity=".3" filter="url(#s2)"/><polygon points="183.4,86.7 174.8,95.1 194.6,111.6 203,102.2" fill="#c59b5a"/><polygon points="183.4,86.7 174.8,95.1 176.6,96.6 185.2,88.2" fill="#ddb97a"/><g transform="translate(186.8,95.2) rotate(40)" fill="#7a5a22" opacity=".7"><rect x="0" y="-1.6" width="4.2" height="1.1"/><rect x="5.2" y="-1.6" width="4.6" height="1.1"/></g><ellipse cx="17" cy="66" rx="14" ry="9" fill="#2a2018" opacity=".35" filter="url(#s2)" transform="rotate(18 17 66)"/><ellipse cx="16.2" cy="64.7" rx="14" ry="9.4" fill="#43342a" transform="rotate(17 16.2 64.7)"/><g transform="rotate(17 16.2 64.7)"><path d="M9.5 58.3 L10.9 56.7 L12.2 58.3 Z" fill="#8f745d" opacity="0.85"/><path d="M12.6 58.3 L14.0 56.7 L15.3 58.3 Z" fill="#8f745d" opacity="0.85"/><path d="M15.7 58.3 L17.1 56.7 L18.4 58.3 Z" fill="#8f745d" opacity="0.85"/><path d="M18.8 58.3 L20.2 56.7 L21.5 58.3 Z" fill="#8f745d" opacity="0.85"/><path d="M21.9 58.3 L23.3 56.7 L24.6 58.3 Z" fill="#8f745d" opacity="0.85"/><path d="M5.1 60.6 L6.5 59.0 L7.8 60.6 Z" fill="#8f745d" opacity="0.75"/><path d="M8.2 60.6 L9.6 59.0 L10.9 60.6 Z" fill="#8f745d" opacity="0.75"/><path d="M11.3 60.6 L12.7 59.0 L14.0 60.6 Z" fill="#8f745d" opacity="0.75"/><path d="M14.4 60.6 L15.8 59.0 L17.1 60.6 Z" fill="#8f745d" opacity="0.75"/><path d="M17.5 60.6 L18.9 59.0 L20.2 60.6 Z" fill="#8f745d" opacity="0.75"/><path d="M20.6 60.6 L22.0 59.0 L23.3 60.6 Z" fill="#8f745d" opacity="0.75"/><path d="M23.7 60.6 L25.1 59.0 L26.4 60.6 Z" fill="#8f745d" opacity="0.75"/><path d="M5.2 63.0 L6.6 61.4 L7.9 63.0 Z" fill="#8f745d" opacity="0.65"/><path d="M8.3 63.0 L9.7 61.4 L11.0 63.0 Z" fill="#8f745d" opacity="0.65"/><path d="M11.4 63.0 L12.8 61.4 L14.1 63.0 Z" fill="#8f745d" opacity="0.65"/><path d="M14.5 63.0 L15.9 61.4 L17.2 63.0 Z" fill="#8f745d" opacity="0.65"/><path d="M17.6 63.0 L19.0 61.4 L20.3 63.0 Z" fill="#8f745d" opacity="0.65"/><path d="M20.7 63.0 L22.1 61.4 L23.4 63.0 Z" fill="#8f745d" opacity="0.65"/><path d="M23.8 63.0 L25.2 61.4 L26.5 63.0 Z" fill="#8f745d" opacity="0.65"/><path d="M3.2 65.3 L4.6 63.7 L5.9 65.3 Z" fill="#8f745d" opacity="0.55"/><path d="M6.3 65.3 L7.7 63.7 L9.0 65.3 Z" fill="#8f745d" opacity="0.55"/><path d="M9.5 65.3 L10.8 63.7 L12.2 65.3 Z" fill="#8f745d" opacity="0.55"/><path d="M12.6 65.3 L13.9 63.7 L15.2 65.3 Z" fill="#8f745d" opacity="0.55"/><path d="M15.7 65.3 L17.0 63.7 L18.4 65.3 Z" fill="#8f745d" opacity="0.55"/><path d="M18.8 65.3 L20.1 63.7 L21.5 65.3 Z" fill="#8f745d" opacity="0.55"/><path d="M21.9 65.3 L23.2 63.7 L24.6 65.3 Z" fill="#8f745d" opacity="0.55"/><path d="M24.9 65.3 L26.3 63.7 L27.6 65.3 Z" fill="#8f745d" opacity="0.55"/><path d="M5.2 67.6 L6.6 66.0 L7.9 67.6 Z" fill="#8f745d" opacity="0.45"/><path d="M8.3 67.6 L9.7 66.0 L11.0 67.6 Z" fill="#8f745d" opacity="0.45"/><path d="M11.4 67.6 L12.8 66.0 L14.1 67.6 Z" fill="#8f745d" opacity="0.45"/><path d="M14.5 67.6 L15.9 66.0 L17.2 67.6 Z" fill="#8f745d" opacity="0.45"/><path d="M17.6 67.6 L19.0 66.0 L20.3 67.6 Z" fill="#8f745d" opacity="0.45"/><path d="M20.7 67.6 L22.1 66.0 L23.4 67.6 Z" fill="#8f745d" opacity="0.45"/><path d="M23.8 67.6 L25.2 66.0 L26.5 67.6 Z" fill="#8f745d" opacity="0.45"/><path d="M5.1 70.0 L6.5 68.4 L7.8 70.0 Z" fill="#8f745d" opacity="0.35"/><path d="M8.2 70.0 L9.6 68.4 L10.9 70.0 Z" fill="#8f745d" opacity="0.35"/><path d="M11.3 70.0 L12.7 68.4 L14.0 70.0 Z" fill="#8f745d" opacity="0.35"/><path d="M14.4 70.0 L15.8 68.4 L17.1 70.0 Z" fill="#8f745d" opacity="0.35"/><path d="M17.5 70.0 L18.9 68.4 L20.2 70.0 Z" fill="#8f745d" opacity="0.35"/><path d="M20.6 70.0 L22.0 68.4 L23.3 70.0 Z" fill="#8f745d" opacity="0.35"/><path d="M23.7 70.0 L25.1 68.4 L26.4 70.0 Z" fill="#8f745d" opacity="0.35"/><path d="M9.5 72.3 L10.9 70.8 L12.2 72.3 Z" fill="#8f745d" opacity="0.25"/><path d="M12.6 72.3 L14.0 70.8 L15.3 72.3 Z" fill="#8f745d" opacity="0.25"/><path d="M15.7 72.3 L17.1 70.8 L18.4 72.3 Z" fill="#8f745d" opacity="0.25"/><path d="M18.8 72.3 L20.2 70.8 L21.5 72.3 Z" fill="#8f745d" opacity="0.25"/><path d="M21.9 72.3 L23.3 70.8 L24.6 72.3 Z" fill="#8f745d" opacity="0.25"/></g><polygon points="12.1,102.8 40.6,83.7 43.1,84.6 43.3,88 15.2,105.5 12.6,105.2" fill="#1c2327"/><g fill="none" stroke="#1c2327" stroke-linejoin="round"><path d="M31.2 93 Q31.4 97.6 35.5 97.7 L40 97.1 Q43.9 95.8 43.6 88" stroke-width="1.45"/><path d="M16.4 104 Q17.4 108 21.6 108 Q27.4 106.8 28.4 102.4 L28.5 96.5" stroke-width="1.45"/><path d="M13.2 104.5 L17.6 112" stroke-width="1.3" opacity=".75"/></g><polygon points="58.2,99.1 76.9,107.1 76.4,113 52.4,113" fill="#e7e4c6"/></g></svg>
  <h2>Mastering Tailwind CSS</h2>
  <p style="top:147.9px">Tailwind CSS is a utility-first CSS framework......</p>
  <div class="tag" style="top:184.3px">CSS</div>
</div>
<div class="card" style="left:721px;top:104px;height:214px">
  <svg class="img" width="206" height="112" viewBox="0 0 206 112" preserveAspectRatio="none" aria-hidden="true"><filter id="g3" x="0" y="0" width="100%" height="100%" color-interpolation-filters="sRGB"><feTurbulence type="fractalNoise" baseFrequency="0.7 0.05" numOctaves="3" seed="4" result="n"/><feColorMatrix in="n" type="matrix" values="0 0 0 0 0.62  0 0 0 0 0.51  0 0 0 0 0.38  0.8 0.8 0 0 -0.66"/></filter><filter id="h3" x="0" y="0" width="100%" height="100%" color-interpolation-filters="sRGB"><feTurbulence type="fractalNoise" baseFrequency="0.6 0.04" numOctaves="3" seed="11" result="n"/><feColorMatrix in="n" type="matrix" values="0 0 0 0 0.33  0 0 0 0 0.27  0 0 0 0 0.21  1.1 1.1 0 0 -1.0"/></filter><filter id="b3" x="-5%" y="-5%" width="110%" height="110%"><feGaussianBlur stdDeviation="0.45"/></filter><filter id="s3" x="-20%" y="-20%" width="140%" height="140%"><feGaussianBlur stdDeviation="1.1"/></filter><filter id="t3" x="-60%" y="-60%" width="220%" height="220%"><feGaussianBlur stdDeviation="3.5"/></filter><g filter="url(#b3)"><rect x="-3.5" y="0" width="25.0" height="112" fill="#ad9e8a"/><rect x="21.3" y="0" width="26.0" height="112" fill="#bba891"/><rect x="47.1" y="0" width="26.5" height="112" fill="#dfd5b6"/><rect x="73.4" y="0" width="25.1" height="112" fill="#dacfb1"/><rect x="98.3" y="0" width="25.1" height="112" fill="#ddd2b4"/><rect x="123.2" y="0" width="25.0" height="112" fill="#ded4b5"/><rect x="148" y="0" width="24.6" height="112" fill="#e0d6b9"/><rect x="172.4" y="0" width="24.2" height="112" fill="#d2c6ab"/><rect x="196.4" y="0" width="24.8" height="112" fill="#c6b8a1"/><rect x="1" y="0" width="2.2" height="112" fill="#857563" opacity="0.4"/><rect x="11" y="0" width="1.5" height="112" fill="#7f6f5e" opacity="0.35"/><rect x="19" y="0" width="1.5" height="112" fill="#85745f" opacity="0.3"/><rect x="5" y="30" width="2" height="82" fill="#b3a48f" opacity="0.35"/><rect x="8" y="40" width="3" height="72" fill="#8f7b66" opacity="0.3"/><rect x="14" y="0" width="2" height="60" fill="#b5a691" opacity="0.35"/><rect x="17" y="50" width="2.5" height="62" fill="#93826e" opacity="0.3"/><rect x="21.5" y="40" width="8" height="72" fill="#a08e78" opacity="0.45"/><rect x="24" y="0" width="2.5" height="112" fill="#a99780" opacity="0.4"/><rect x="31" y="30" width="2.5" height="82" fill="#c9bba1" opacity="0.4"/><rect x="36" y="0" width="2" height="112" fill="#c5b69d" opacity="0.4"/><rect x="41" y="0" width="3" height="112" fill="#b39e86" opacity="0.4"/><rect x="53" y="0" width="4" height="112" fill="#e3dabf" opacity="0.5"/><rect x="61" y="0" width="2.5" height="112" fill="#cdb99e" opacity="0.4"/><rect x="67" y="20" width="2" height="92" fill="#e3dbc0" opacity="0.4"/><rect x="79" y="30" width="3" height="82" fill="#ccb9a0" opacity="0.4"/><rect x="87" y="0" width="3.5" height="112" fill="#e0d7bc" opacity="0.45"/><rect x="104" y="34" width="3" height="78" fill="#cfbda3" opacity="0.35"/><rect x="111" y="34" width="3" height="78" fill="#e1d8be" opacity="0.4"/><rect x="129" y="34" width="3" height="78" fill="#cfbea4" opacity="0.35"/><rect x="137" y="0" width="3" height="112" fill="#e2d9c0" opacity="0.4"/><rect x="154" y="40" width="3" height="72" fill="#cfbfa6" opacity="0.3"/><rect x="162" y="50" width="3" height="62" fill="#e2dac2" opacity="0.35"/><rect x="179" y="60" width="3" height="52" fill="#c5b69f" opacity="0.35"/><rect x="187" y="70" width="2.5" height="42" fill="#dcd2ba" opacity="0.35"/><rect x="199" y="50" width="3" height="62" fill="#bbad98" opacity="0.4"/><linearGradient id="d3" x1="0" y1="0" x2="0" y2="1"><stop offset="0" stop-color="#6b5a49" stop-opacity=".04"/><stop offset="1" stop-color="#6b5a49" stop-opacity=".26"/></linearGradient><rect x="0" y="0" width="30" height="112" fill="url(#d3)"/><rect x="30" y="0" width="17" height="112" fill="url(#d3)" opacity=".5"/><ellipse cx="4" cy="106" rx="9" ry="20" fill="#40392e" opacity=".85" filter="url(#t3)"/><ellipse cx="13" cy="92.5" rx="6" ry="4.5" fill="#b08a55" opacity=".6" filter="url(#s3)"/><ellipse cx="1" cy="70" rx="4" ry="40" fill="#5f5247" opacity=".5" filter="url(#t3)"/><linearGradient id="w3" x1="0" y1="0" x2="0" y2="1"><stop offset="0" stop-color="#bf9b6c" stop-opacity=".45"/><stop offset="1" stop-color="#bf9b6c" stop-opacity="0"/></linearGradient><rect x="72" y="28" width="72" height="30" fill="url(#w3)" filter="url(#s3)"/><rect x="0" y="0" width="206" height="112" filter="url(#g3)"/><rect x="0" y="0" width="47" height="112" filter="url(#h3)"/><rect x="21.00" y="0" width="0.6" height="112" fill="#3d4942" opacity="0.4"/><rect x="29.05" y="0" width="0.5" height="112" fill="#3d4942" opacity="0.25"/><rect x="46.80" y="0" width="0.6" height="112" fill="#3d4942" opacity="0.85"/><rect x="73.10" y="0" width="0.6" height="112" fill="#3d4942" opacity="0.9"/><rect x="98.00" y="0" width="0.6" height="112" fill="#3d4942" opacity="0.9"/><rect x="122.90" y="0" width="0.6" height="112" fill="#3d4942" opacity="0.85"/><rect x="148.10" y="0" width="0.6" height="112" fill="#3d4942" opacity="0.7"/><rect x="172.10" y="0" width="0.6" height="112" fill="#3d4942" opacity="0.9"/><rect x="196.10" y="0" width="0.6" height="112" fill="#3d4942" opacity="0.7"/><path d="M13.3 24 Q16.5 40 16 55" fill="none" stroke="#343a31" stroke-width="1" opacity=".95"/><path d="M21.8 38 Q21.5 48 19 57" fill="none" stroke="#343a31" stroke-width="1" opacity=".9"/><polygon points="5,11 19,2 39,1 60,31 32,50" fill="#3a3225" opacity=".35" filter="url(#s3)"/><polygon points="37.2,0 41.2,0 60.2,29 57,31.2" fill="#5b5645"/><polygon points="37.2,0 40.4,0 59.4,29 57,31" fill="#c8b88e"/><polygon points="3.4,8.9 17.3,0 37.6,0 57.2,30.8 30.7,48.4" fill="#2c4037"/><polygon points="8,9.5 18,3 36,3 53,29.5 31.5,43.5" fill="#32473d" opacity=".7"/><rect x="72.5" y="-2" width="71" height="37.5" rx="2.5" fill="#2a2f28" opacity=".4" filter="url(#s3)"/><rect x="73" y="-4" width="69.7" height="37.6" rx="3" fill="#2b4843"/><rect x="73" y="-3" width="69.7" height="7" fill="#2b4a44"/><rect x="74" y="4" width="67.7" height="1" fill="#223833"/><rect x="74.5" y="27.3" width="66.4" height="5.4" rx="1.2" fill="#31564e"/><path d="M76.5 5.6 H138.8 V14 L136.6 27.6 H78.6 L76.5 14 Z" fill="#1f2a27"/><rect x="90.8" y="27.1" width="32.6" height="3.6" rx=".6" fill="#b48f65"/><circle cx="80.7" cy="8.9" r="1.8" fill="#a0845f"/><circle cx="80.7" cy="8.9" r=".8" fill="#5c4a35" opacity=".5"/><circle cx="85.5" cy="8.9" r="1.8" fill="#a0845f"/><circle cx="85.5" cy="8.9" r=".8" fill="#5c4a35" opacity=".5"/><circle cx="90.3" cy="8.9" r="1.8" fill="#a0845f"/><circle cx="90.3" cy="8.9" r=".8" fill="#5c4a35" opacity=".5"/><circle cx="95.1" cy="8.9" r="1.8" fill="#a0845f"/><circle cx="95.1" cy="8.9" r=".8" fill="#5c4a35" opacity=".5"/><circle cx="99.9" cy="8.9" r="1.8" fill="#a0845f"/><circle cx="99.9" cy="8.9" r=".8" fill="#5c4a35" opacity=".5"/><circle cx="104.7" cy="8.9" r="1.8" fill="#a0845f"/><circle cx="104.7" cy="8.9" r=".8" fill="#5c4a35" opacity=".5"/><circle cx="109.4" cy="8.9" r="1.8" fill="#a0845f"/><circle cx="109.4" cy="8.9" r=".8" fill="#5c4a35" opacity=".5"/><circle cx="114.2" cy="8.9" r="1.8" fill="#a0845f"/><circle cx="114.2" cy="8.9" r=".8" fill="#5c4a35" opacity=".5"/><circle cx="119.0" cy="8.9" r="1.8" fill="#a0845f"/><circle cx="119.0" cy="8.9" r=".8" fill="#5c4a35" opacity=".5"/><circle cx="123.8" cy="8.9" r="1.8" fill="#a0845f"/><circle cx="123.8" cy="8.9" r=".8" fill="#5c4a35" opacity=".5"/><circle cx="128.6" cy="8.9" r="1.8" fill="#a0845f"/><circle cx="128.6" cy="8.9" r=".8" fill="#5c4a35" opacity=".5"/><circle cx="133.4" cy="8.9" r="1.8" fill="#a0845f"/><circle cx="133.4" cy="8.9" r=".8" fill="#5c4a35" opacity=".5"/><circle cx="138.2" cy="8.9" r="1.8" fill="#a0845f"/><circle cx="138.2" cy="8.9" r=".8" fill="#5c4a35" opacity=".5"/><circle cx="83.1" cy="13.8" r="1.8" fill="#a0845f"/><circle cx="83.1" cy="13.8" r=".8" fill="#5c4a35" opacity=".5"/><circle cx="87.9" cy="13.8" r="1.8" fill="#a0845f"/><circle cx="87.9" cy="13.8" r=".8" fill="#5c4a35" opacity=".5"/><circle cx="92.7" cy="13.8" r="1.8" fill="#a0845f"/><circle cx="92.7" cy="13.8" r=".8" fill="#5c4a35" opacity=".5"/><circle cx="97.5" cy="13.8" r="1.8" fill="#a0845f"/><circle cx="97.5" cy="13.8" r=".8" fill="#5c4a35" opacity=".5"/><circle cx="102.3" cy="13.8" r="1.8" fill="#a0845f"/><circle cx="102.3" cy="13.8" r=".8" fill="#5c4a35" opacity=".5"/><circle cx="107.0" cy="13.8" r="1.8" fill="#a0845f"/><circle cx="107.0" cy="13.8" r=".8" fill="#5c4a35" opacity=".5"/><circle cx="111.8" cy="13.8" r="1.8" fill="#a0845f"/><circle cx="111.8" cy="13.8" r=".8" fill="#5c4a35" opacity=".5"/><circle cx="116.6" cy="13.8" r="1.8" fill="#a0845f"/><circle cx="116.6" cy="13.8" r=".8" fill="#5c4a35" opacity=".5"/><circle cx="121.4" cy="13.8" r="1.8" fill="#a0845f"/><circle cx="121.4" cy="13.8" r=".8" fill="#5c4a35" opacity=".5"/><circle cx="126.2" cy="13.8" r="1.8" fill="#a0845f"/><circle cx="126.2" cy="13.8" r=".8" fill="#5c4a35" opacity=".5"/><circle cx="131.0" cy="13.8" r="1.8" fill="#a0845f"/><circle cx="131.0" cy="13.8" r=".8" fill="#5c4a35" opacity=".5"/><circle cx="84.4" cy="18.9" r="1.8" fill="#a0845f"/><circle cx="84.4" cy="18.9" r=".8" fill="#5c4a35" opacity=".5"/><circle cx="89.1" cy="18.9" r="1.8" fill="#a0845f"/><circle cx="89.1" cy="18.9" r=".8" fill="#5c4a35" opacity=".5"/><circle cx="93.8" cy="18.9" r="1.8" fill="#a0845f"/><circle cx="93.8" cy="18.9" r=".8" fill="#5c4a35" opacity=".5"/><circle cx="98.5" cy="18.9" r="1.8" fill="#a0845f"/><circle cx="98.5" cy="18.9" r=".8" fill="#5c4a35" opacity=".5"/><circle cx="103.2" cy="18.9" r="1.8" fill="#a0845f"/><circle cx="103.2" cy="18.9" r=".8" fill="#5c4a35" opacity=".5"/><circle cx="107.9" cy="18.9" r="1.8" fill="#a0845f"/><circle cx="107.9" cy="18.9" r=".8" fill="#5c4a35" opacity=".5"/><circle cx="112.6" cy="18.9" r="1.8" fill="#a0845f"/><circle cx="112.6" cy="18.9" r=".8" fill="#5c4a35" opacity=".5"/><circle cx="117.3" cy="18.9" r="1.8" fill="#a0845f"/><circle cx="117.3" cy="18.9" r=".8" fill="#5c4a35" opacity=".5"/><circle cx="122.0" cy="18.9" r="1.8" fill="#a0845f"/><circle cx="122.0" cy="18.9" r=".8" fill="#5c4a35" opacity=".5"/><circle cx="126.7" cy="18.9" r="1.8" fill="#a0845f"/><circle cx="126.7" cy="18.9" r=".8" fill="#5c4a35" opacity=".5"/><circle cx="131.4" cy="18.9" r="1.8" fill="#a0845f"/><circle cx="131.4" cy="18.9" r=".8" fill="#5c4a35" opacity=".5"/><circle cx="86.7" cy="23.8" r="1.8" fill="#a0845f"/><circle cx="86.7" cy="23.8" r=".8" fill="#5c4a35" opacity=".5"/><circle cx="91.4" cy="23.8" r="1.8" fill="#a0845f"/><circle cx="91.4" cy="23.8" r=".8" fill="#5c4a35" opacity=".5"/><circle cx="96.1" cy="23.8" r="1.8" fill="#a0845f"/><circle cx="96.1" cy="23.8" r=".8" fill="#5c4a35" opacity=".5"/><circle cx="100.7" cy="23.8" r="1.8" fill="#a0845f"/><circle cx="100.7" cy="23.8" r=".8" fill="#5c4a35" opacity=".5"/><circle cx="105.4" cy="23.8" r="1.8" fill="#a0845f"/><circle cx="105.4" cy="23.8" r=".8" fill="#5c4a35" opacity=".5"/><circle cx="110.1" cy="23.8" r="1.8" fill="#a0845f"/><circle cx="110.1" cy="23.8" r=".8" fill="#5c4a35" opacity=".5"/><circle cx="114.8" cy="23.8" r="1.8" fill="#a0845f"/><circle cx="114.8" cy="23.8" r=".8" fill="#5c4a35" opacity=".5"/><circle cx="119.5" cy="23.8" r="1.8" fill="#a0845f"/><circle cx="119.5" cy="23.8" r=".8" fill="#5c4a35" opacity=".5"/><circle cx="124.1" cy="23.8" r="1.8" fill="#a0845f"/><circle cx="124.1" cy="23.8" r=".8" fill="#5c4a35" opacity=".5"/><circle cx="128.8" cy="23.8" r="1.8" fill="#a0845f"/><circle cx="128.8" cy="23.8" r=".8" fill="#5c4a35" opacity=".5"/><circle cx="77.6" cy="12" r="1.9" fill="#a0845f"/><circle cx="135.7" cy="15.8" r="1.9" fill="#a0845f" opacity=".9"/><circle cx="79.8" cy="19" r="1.8" fill="#a0845f" opacity=".6"/><circle cx="133.5" cy="24.9" r="1.9" fill="#a0845f" opacity=".6"/><rect x="79" y="24.2" width="5" height="3" rx=".8" fill="#a0845f"/><polygon points="141.7,32 161,1 206,1 206,47 191,66 166,49" fill="#3a3225" opacity=".3" filter="url(#s3)"/><polygon points="141.7,31.1 160.9,0 186,0 192.9,6.2 166.2,47.1" fill="#ebe8c9"/><polygon points="192.9,6.2 206,14.2 206,45.3 191,64 166.2,47.1" fill="#e6e4c3"/><polygon points="192.9,6.2 194.6,7.3 167.8,48.2 166.2,47.1" fill="#efedd0" opacity=".5"/><line x1="192.9" y1="6.2" x2="166.2" y2="47.1" stroke="#c9c6a3" stroke-width=".5"/><line x1="187.2" y1="73" x2="207" y2="56.8" stroke="#7d6756" stroke-width="2.6" stroke-linecap="round"/><polygon points="184,88 176,96 195,113 204,103" fill="#3a3225" opacity=".3" filter="url(#s3)"/><polygon points="183.4,86.7 174.8,95.1 194.6,111.6 203,102.2" fill="#c59b5a"/><polygon points="183.4,86.7 174.8,95.1 176.6,96.6 185.2,88.2" fill="#ddb97a"/><g transform="translate(186.8,95.2) rotate(40)" fill="#7a5a22" opacity=".7"><rect x="0" y="-1.6" width="4.2" height="1.1"/><rect x="5.2" y="-1.6" width="4.6" height="1.1"/></g><ellipse cx="17" cy="66" rx="14" ry="9" fill="#2a2018" opacity=".35" filter="url(#s3)" transform="rotate(18 17 66)"/><ellipse cx="16.2" cy="64.7" rx="14" ry="9.4" fill="#43342a" transform="rotate(17 16.2 64.7)"/><g transform="rotate(17 16.2 64.7)"><path d="M9.5 58.3 L10.9 56.7 L12.2 58.3 Z" fill="#8f745d" opacity="0.85"/><path d="M12.6 58.3 L14.0 56.7 L15.3 58.3 Z" fill="#8f745d" opacity="0.85"/><path d="M15.7 58.3 L17.1 56.7 L18.4 58.3 Z" fill="#8f745d" opacity="0.85"/><path d="M18.8 58.3 L20.2 56.7 L21.5 58.3 Z" fill="#8f745d" opacity="0.85"/><path d="M21.9 58.3 L23.3 56.7 L24.6 58.3 Z" fill="#8f745d" opacity="0.85"/><path d="M5.1 60.6 L6.5 59.0 L7.8 60.6 Z" fill="#8f745d" opacity="0.75"/><path d="M8.2 60.6 L9.6 59.0 L10.9 60.6 Z" fill="#8f745d" opacity="0.75"/><path d="M11.3 60.6 L12.7 59.0 L14.0 60.6 Z" fill="#8f745d" opacity="0.75"/><path d="M14.4 60.6 L15.8 59.0 L17.1 60.6 Z" fill="#8f745d" opacity="0.75"/><path d="M17.5 60.6 L18.9 59.0 L20.2 60.6 Z" fill="#8f745d" opacity="0.75"/><path d="M20.6 60.6 L22.0 59.0 L23.3 60.6 Z" fill="#8f745d" opacity="0.75"/><path d="M23.7 60.6 L25.1 59.0 L26.4 60.6 Z" fill="#8f745d" opacity="0.75"/><path d="M5.2 63.0 L6.6 61.4 L7.9 63.0 Z" fill="#8f745d" opacity="0.65"/><path d="M8.3 63.0 L9.7 61.4 L11.0 63.0 Z" fill="#8f745d" opacity="0.65"/><path d="M11.4 63.0 L12.8 61.4 L14.1 63.0 Z" fill="#8f745d" opacity="0.65"/><path d="M14.5 63.0 L15.9 61.4 L17.2 63.0 Z" fill="#8f745d" opacity="0.65"/><path d="M17.6 63.0 L19.0 61.4 L20.3 63.0 Z" fill="#8f745d" opacity="0.65"/><path d="M20.7 63.0 L22.1 61.4 L23.4 63.0 Z" fill="#8f745d" opacity="0.65"/><path d="M23.8 63.0 L25.2 61.4 L26.5 63.0 Z" fill="#8f745d" opacity="0.65"/><path d="M3.2 65.3 L4.6 63.7 L5.9 65.3 Z" fill="#8f745d" opacity="0.55"/><path d="M6.3 65.3 L7.7 63.7 L9.0 65.3 Z" fill="#8f745d" opacity="0.55"/><path d="M9.5 65.3 L10.8 63.7 L12.2 65.3 Z" fill="#8f745d" opacity="0.55"/><path d="M12.6 65.3 L13.9 63.7 L15.2 65.3 Z" fill="#8f745d" opacity="0.55"/><path d="M15.7 65.3 L17.0 63.7 L18.4 65.3 Z" fill="#8f745d" opacity="0.55"/><path d="M18.8 65.3 L20.1 63.7 L21.5 65.3 Z" fill="#8f745d" opacity="0.55"/><path d="M21.9 65.3 L23.2 63.7 L24.6 65.3 Z" fill="#8f745d" opacity="0.55"/><path d="M24.9 65.3 L26.3 63.7 L27.6 65.3 Z" fill="#8f745d" opacity="0.55"/><path d="M5.2 67.6 L6.6 66.0 L7.9 67.6 Z" fill="#8f745d" opacity="0.45"/><path d="M8.3 67.6 L9.7 66.0 L11.0 67.6 Z" fill="#8f745d" opacity="0.45"/><path d="M11.4 67.6 L12.8 66.0 L14.1 67.6 Z" fill="#8f745d" opacity="0.45"/><path d="M14.5 67.6 L15.9 66.0 L17.2 67.6 Z" fill="#8f745d" opacity="0.45"/><path d="M17.6 67.6 L19.0 66.0 L20.3 67.6 Z" fill="#8f745d" opacity="0.45"/><path d="M20.7 67.6 L22.1 66.0 L23.4 67.6 Z" fill="#8f745d" opacity="0.45"/><path d="M23.8 67.6 L25.2 66.0 L26.5 67.6 Z" fill="#8f745d" opacity="0.45"/><path d="M5.1 70.0 L6.5 68.4 L7.8 70.0 Z" fill="#8f745d" opacity="0.35"/><path d="M8.2 70.0 L9.6 68.4 L10.9 70.0 Z" fill="#8f745d" opacity="0.35"/><path d="M11.3 70.0 L12.7 68.4 L14.0 70.0 Z" fill="#8f745d" opacity="0.35"/><path d="M14.4 70.0 L15.8 68.4 L17.1 70.0 Z" fill="#8f745d" opacity="0.35"/><path d="M17.5 70.0 L18.9 68.4 L20.2 70.0 Z" fill="#8f745d" opacity="0.35"/><path d="M20.6 70.0 L22.0 68.4 L23.3 70.0 Z" fill="#8f745d" opacity="0.35"/><path d="M23.7 70.0 L25.1 68.4 L26.4 70.0 Z" fill="#8f745d" opacity="0.35"/><path d="M9.5 72.3 L10.9 70.8 L12.2 72.3 Z" fill="#8f745d" opacity="0.25"/><path d="M12.6 72.3 L14.0 70.8 L15.3 72.3 Z" fill="#8f745d" opacity="0.25"/><path d="M15.7 72.3 L17.1 70.8 L18.4 72.3 Z" fill="#8f745d" opacity="0.25"/><path d="M18.8 72.3 L20.2 70.8 L21.5 72.3 Z" fill="#8f745d" opacity="0.25"/><path d="M21.9 72.3 L23.3 70.8 L24.6 72.3 Z" fill="#8f745d" opacity="0.25"/></g><polygon points="12.1,102.8 40.6,83.7 43.1,84.6 43.3,88 15.2,105.5 12.6,105.2" fill="#1c2327"/><g fill="none" stroke="#1c2327" stroke-linejoin="round"><path d="M31.2 93 Q31.4 97.6 35.5 97.7 L40 97.1 Q43.9 95.8 43.6 88" stroke-width="1.45"/><path d="M16.4 104 Q17.4 108 21.6 108 Q27.4 106.8 28.4 102.4 L28.5 96.5" stroke-width="1.45"/><path d="M13.2 104.5 L17.6 112" stroke-width="1.3" opacity=".75"/></g><polygon points="58.2,99.1 76.9,107.1 76.4,113 52.4,113" fill="#e7e4c6"/></g></svg>
  <h2>JavaScript ES6 Features</h2>
  <p style="top:147.9px">ES6 introduced many new features to JavaScript......</p>
  <div class="tag" style="top:184.3px">JavaScript</div>
</div>
<div class="card" style="left:273px;top:337px;height:231px">
  <svg class="img" width="206" height="112" viewBox="0 0 206 112" preserveAspectRatio="none" aria-hidden="true"><filter id="g4" x="0" y="0" width="100%" height="100%" color-interpolation-filters="sRGB"><feTurbulence type="fractalNoise" baseFrequency="0.7 0.05" numOctaves="3" seed="4" result="n"/><feColorMatrix in="n" type="matrix" values="0 0 0 0 0.62  0 0 0 0 0.51  0 0 0 0 0.38  0.8 0.8 0 0 -0.66"/></filter><filter id="h4" x="0" y="0" width="100%" height="100%" color-interpolation-filters="sRGB"><feTurbulence type="fractalNoise" baseFrequency="0.6 0.04" numOctaves="3" seed="11" result="n"/><feColorMatrix in="n" type="matrix" values="0 0 0 0 0.33  0 0 0 0 0.27  0 0 0 0 0.21  1.1 1.1 0 0 -1.0"/></filter><filter id="b4" x="-5%" y="-5%" width="110%" height="110%"><feGaussianBlur stdDeviation="0.45"/></filter><filter id="s4" x="-20%" y="-20%" width="140%" height="140%"><feGaussianBlur stdDeviation="1.1"/></filter><filter id="t4" x="-60%" y="-60%" width="220%" height="220%"><feGaussianBlur stdDeviation="3.5"/></filter><g filter="url(#b4)"><rect x="-3.5" y="0" width="25.0" height="112" fill="#ad9e8a"/><rect x="21.3" y="0" width="26.0" height="112" fill="#bba891"/><rect x="47.1" y="0" width="26.5" height="112" fill="#dfd5b6"/><rect x="73.4" y="0" width="25.1" height="112" fill="#dacfb1"/><rect x="98.3" y="0" width="25.1" height="112" fill="#ddd2b4"/><rect x="123.2" y="0" width="25.0" height="112" fill="#ded4b5"/><rect x="148" y="0" width="24.6" height="112" fill="#e0d6b9"/><rect x="172.4" y="0" width="24.2" height="112" fill="#d2c6ab"/><rect x="196.4" y="0" width="24.8" height="112" fill="#c6b8a1"/><rect x="1" y="0" width="2.2" height="112" fill="#857563" opacity="0.4"/><rect x="11" y="0" width="1.5" height="112" fill="#7f6f5e" opacity="0.35"/><rect x="19" y="0" width="1.5" height="112" fill="#85745f" opacity="0.3"/><rect x="5" y="30" width="2" height="82" fill="#b3a48f" opacity="0.35"/><rect x="8" y="40" width="3" height="72" fill="#8f7b66" opacity="0.3"/><rect x="14" y="0" width="2" height="60" fill="#b5a691" opacity="0.35"/><rect x="17" y="50" width="2.5" height="62" fill="#93826e" opacity="0.3"/><rect x="21.5" y="40" width="8" height="72" fill="#a08e78" opacity="0.45"/><rect x="24" y="0" width="2.5" height="112" fill="#a99780" opacity="0.4"/><rect x="31" y="30" width="2.5" height="82" fill="#c9bba1" opacity="0.4"/><rect x="36" y="0" width="2" height="112" fill="#c5b69d" opacity="0.4"/><rect x="41" y="0" width="3" height="112" fill="#b39e86" opacity="0.4"/><rect x="53" y="0" width="4" height="112" fill="#e3dabf" opacity="0.5"/><rect x="61" y="0" width="2.5" height="112" fill="#cdb99e" opacity="0.4"/><rect x="67" y="20" width="2" height="92" fill="#e3dbc0" opacity="0.4"/><rect x="79" y="30" width="3" height="82" fill="#ccb9a0" opacity="0.4"/><rect x="87" y="0" width="3.5" height="112" fill="#e0d7bc" opacity="0.45"/><rect x="104" y="34" width="3" height="78" fill="#cfbda3" opacity="0.35"/><rect x="111" y="34" width="3" height="78" fill="#e1d8be" opacity="0.4"/><rect x="129" y="34" width="3" height="78" fill="#cfbea4" opacity="0.35"/><rect x="137" y="0" width="3" height="112" fill="#e2d9c0" opacity="0.4"/><rect x="154" y="40" width="3" height="72" fill="#cfbfa6" opacity="0.3"/><rect x="162" y="50" width="3" height="62" fill="#e2dac2" opacity="0.35"/><rect x="179" y="60" width="3" height="52" fill="#c5b69f" opacity="0.35"/><rect x="187" y="70" width="2.5" height="42" fill="#dcd2ba" opacity="0.35"/><rect x="199" y="50" width="3" height="62" fill="#bbad98" opacity="0.4"/><linearGradient id="d4" x1="0" y1="0" x2="0" y2="1"><stop offset="0" stop-color="#6b5a49" stop-opacity=".04"/><stop offset="1" stop-color="#6b5a49" stop-opacity=".26"/></linearGradient><rect x="0" y="0" width="30" height="112" fill="url(#d4)"/><rect x="30" y="0" width="17" height="112" fill="url(#d4)" opacity=".5"/><ellipse cx="4" cy="106" rx="9" ry="20" fill="#40392e" opacity=".85" filter="url(#t4)"/><ellipse cx="13" cy="92.5" rx="6" ry="4.5" fill="#b08a55" opacity=".6" filter="url(#s4)"/><ellipse cx="1" cy="70" rx="4" ry="40" fill="#5f5247" opacity=".5" filter="url(#t4)"/><linearGradient id="w4" x1="0" y1="0" x2="0" y2="1"><stop offset="0" stop-color="#bf9b6c" stop-opacity=".45"/><stop offset="1" stop-color="#bf9b6c" stop-opacity="0"/></linearGradient><rect x="72" y="28" width="72" height="30" fill="url(#w4)" filter="url(#s4)"/><rect x="0" y="0" width="206" height="112" filter="url(#g4)"/><rect x="0" y="0" width="47" height="112" filter="url(#h4)"/><rect x="21.00" y="0" width="0.6" height="112" fill="#3d4942" opacity="0.4"/><rect x="29.05" y="0" width="0.5" height="112" fill="#3d4942" opacity="0.25"/><rect x="46.80" y="0" width="0.6" height="112" fill="#3d4942" opacity="0.85"/><rect x="73.10" y="0" width="0.6" height="112" fill="#3d4942" opacity="0.9"/><rect x="98.00" y="0" width="0.6" height="112" fill="#3d4942" opacity="0.9"/><rect x="122.90" y="0" width="0.6" height="112" fill="#3d4942" opacity="0.85"/><rect x="148.10" y="0" width="0.6" height="112" fill="#3d4942" opacity="0.7"/><rect x="172.10" y="0" width="0.6" height="112" fill="#3d4942" opacity="0.9"/><rect x="196.10" y="0" width="0.6" height="112" fill="#3d4942" opacity="0.7"/><path d="M13.3 24 Q16.5 40 16 55" fill="none" stroke="#343a31" stroke-width="1" opacity=".95"/><path d="M21.8 38 Q21.5 48 19 57" fill="none" stroke="#343a31" stroke-width="1" opacity=".9"/><polygon points="5,11 19,2 39,1 60,31 32,50" fill="#3a3225" opacity=".35" filter="url(#s4)"/><polygon points="37.2,0 41.2,0 60.2,29 57,31.2" fill="#5b5645"/><polygon points="37.2,0 40.4,0 59.4,29 57,31" fill="#c8b88e"/><polygon points="3.4,8.9 17.3,0 37.6,0 57.2,30.8 30.7,48.4" fill="#2c4037"/><polygon points="8,9.5 18,3 36,3 53,29.5 31.5,43.5" fill="#32473d" opacity=".7"/><rect x="72.5" y="-2" width="71" height="37.5" rx="2.5" fill="#2a2f28" opacity=".4" filter="url(#s4)"/><rect x="73" y="-4" width="69.7" height="37.6" rx="3" fill="#2b4843"/><rect x="73" y="-3" width="69.7" height="7" fill="#2b4a44"/><rect x="74" y="4" width="67.7" height="1" fill="#223833"/><rect x="74.5" y="27.3" width="66.4" height="5.4" rx="1.2" fill="#31564e"/><path d="M76.5 5.6 H138.8 V14 L136.6 27.6 H78.6 L76.5 14 Z" fill="#1f2a27"/><rect x="90.8" y="27.1" width="32.6" height="3.6" rx=".6" fill="#b48f65"/><circle cx="80.7" cy="8.9" r="1.8" fill="#a0845f"/><circle cx="80.7" cy="8.9" r=".8" fill="#5c4a35" opacity=".5"/><circle cx="85.5" cy="8.9" r="1.8" fill="#a0845f"/><circle cx="85.5" cy="8.9" r=".8" fill="#5c4a35" opacity=".5"/><circle cx="90.3" cy="8.9" r="1.8" fill="#a0845f"/><circle cx="90.3" cy="8.9" r=".8" fill="#5c4a35" opacity=".5"/><circle cx="95.1" cy="8.9" r="1.8" fill="#a0845f"/><circle cx="95.1" cy="8.9" r=".8" fill="#5c4a35" opacity=".5"/><circle cx="99.9" cy="8.9" r="1.8" fill="#a0845f"/><circle cx="99.9" cy="8.9" r=".8" fill="#5c4a35" opacity=".5"/><circle cx="104.7" cy="8.9" r="1.8" fill="#a0845f"/><circle cx="104.7" cy="8.9" r=".8" fill="#5c4a35" opacity=".5"/><circle cx="109.4" cy="8.9" r="1.8" fill="#a0845f"/><circle cx="109.4" cy="8.9" r=".8" fill="#5c4a35" opacity=".5"/><circle cx="114.2" cy="8.9" r="1.8" fill="#a0845f"/><circle cx="114.2" cy="8.9" r=".8" fill="#5c4a35" opacity=".5"/><circle cx="119.0" cy="8.9" r="1.8" fill="#a0845f"/><circle cx="119.0" cy="8.9" r=".8" fill="#5c4a35" opacity=".5"/><circle cx="123.8" cy="8.9" r="1.8" fill="#a0845f"/><circle cx="123.8" cy="8.9" r=".8" fill="#5c4a35" opacity=".5"/><circle cx="128.6" cy="8.9" r="1.8" fill="#a0845f"/><circle cx="128.6" cy="8.9" r=".8" fill="#5c4a35" opacity=".5"/><circle cx="133.4" cy="8.9" r="1.8" fill="#a0845f"/><circle cx="133.4" cy="8.9" r=".8" fill="#5c4a35" opacity=".5"/><circle cx="138.2" cy="8.9" r="1.8" fill="#a0845f"/><circle cx="138.2" cy="8.9" r=".8" fill="#5c4a35" opacity=".5"/><circle cx="83.1" cy="13.8" r="1.8" fill="#a0845f"/><circle cx="83.1" cy="13.8" r=".8" fill="#5c4a35" opacity=".5"/><circle cx="87.9" cy="13.8" r="1.8" fill="#a0845f"/><circle cx="87.9" cy="13.8" r=".8" fill="#5c4a35" opacity=".5"/><circle cx="92.7" cy="13.8" r="1.8" fill="#a0845f"/><circle cx="92.7" cy="13.8" r=".8" fill="#5c4a35" opacity=".5"/><circle cx="97.5" cy="13.8" r="1.8" fill="#a0845f"/><circle cx="97.5" cy="13.8" r=".8" fill="#5c4a35" opacity=".5"/><circle cx="102.3" cy="13.8" r="1.8" fill="#a0845f"/><circle cx="102.3" cy="13.8" r=".8" fill="#5c4a35" opacity=".5"/><circle cx="107.0" cy="13.8" r="1.8" fill="#a0845f"/><circle cx="107.0" cy="13.8" r=".8" fill="#5c4a35" opacity=".5"/><circle cx="111.8" cy="13.8" r="1.8" fill="#a0845f"/><circle cx="111.8" cy="13.8" r=".8" fill="#5c4a35" opacity=".5"/><circle cx="116.6" cy="13.8" r="1.8" fill="#a0845f"/><circle cx="116.6" cy="13.8" r=".8" fill="#5c4a35" opacity=".5"/><circle cx="121.4" cy="13.8" r="1.8" fill="#a0845f"/><circle cx="121.4" cy="13.8" r=".8" fill="#5c4a35" opacity=".5"/><circle cx="126.2" cy="13.8" r="1.8" fill="#a0845f"/><circle cx="126.2" cy="13.8" r=".8" fill="#5c4a35" opacity=".5"/><circle cx="131.0" cy="13.8" r="1.8" fill="#a0845f"/><circle cx="131.0" cy="13.8" r=".8" fill="#5c4a35" opacity=".5"/><circle cx="84.4" cy="18.9" r="1.8" fill="#a0845f"/><circle cx="84.4" cy="18.9" r=".8" fill="#5c4a35" opacity=".5"/><circle cx="89.1" cy="18.9" r="1.8" fill="#a0845f"/><circle cx="89.1" cy="18.9" r=".8" fill="#5c4a35" opacity=".5"/><circle cx="93.8" cy="18.9" r="1.8" fill="#a0845f"/><circle cx="93.8" cy="18.9" r=".8" fill="#5c4a35" opacity=".5"/><circle cx="98.5" cy="18.9" r="1.8" fill="#a0845f"/><circle cx="98.5" cy="18.9" r=".8" fill="#5c4a35" opacity=".5"/><circle cx="103.2" cy="18.9" r="1.8" fill="#a0845f"/><circle cx="103.2" cy="18.9" r=".8" fill="#5c4a35" opacity=".5"/><circle cx="107.9" cy="18.9" r="1.8" fill="#a0845f"/><circle cx="107.9" cy="18.9" r=".8" fill="#5c4a35" opacity=".5"/><circle cx="112.6" cy="18.9" r="1.8" fill="#a0845f"/><circle cx="112.6" cy="18.9" r=".8" fill="#5c4a35" opacity=".5"/><circle cx="117.3" cy="18.9" r="1.8" fill="#a0845f"/><circle cx="117.3" cy="18.9" r=".8" fill="#5c4a35" opacity=".5"/><circle cx="122.0" cy="18.9" r="1.8" fill="#a0845f"/><circle cx="122.0" cy="18.9" r=".8" fill="#5c4a35" opacity=".5"/><circle cx="126.7" cy="18.9" r="1.8" fill="#a0845f"/><circle cx="126.7" cy="18.9" r=".8" fill="#5c4a35" opacity=".5"/><circle cx="131.4" cy="18.9" r="1.8" fill="#a0845f"/><circle cx="131.4" cy="18.9" r=".8" fill="#5c4a35" opacity=".5"/><circle cx="86.7" cy="23.8" r="1.8" fill="#a0845f"/><circle cx="86.7" cy="23.8" r=".8" fill="#5c4a35" opacity=".5"/><circle cx="91.4" cy="23.8" r="1.8" fill="#a0845f"/><circle cx="91.4" cy="23.8" r=".8" fill="#5c4a35" opacity=".5"/><circle cx="96.1" cy="23.8" r="1.8" fill="#a0845f"/><circle cx="96.1" cy="23.8" r=".8" fill="#5c4a35" opacity=".5"/><circle cx="100.7" cy="23.8" r="1.8" fill="#a0845f"/><circle cx="100.7" cy="23.8" r=".8" fill="#5c4a35" opacity=".5"/><circle cx="105.4" cy="23.8" r="1.8" fill="#a0845f"/><circle cx="105.4" cy="23.8" r=".8" fill="#5c4a35" opacity=".5"/><circle cx="110.1" cy="23.8" r="1.8" fill="#a0845f"/><circle cx="110.1" cy="23.8" r=".8" fill="#5c4a35" opacity=".5"/><circle cx="114.8" cy="23.8" r="1.8" fill="#a0845f"/><circle cx="114.8" cy="23.8" r=".8" fill="#5c4a35" opacity=".5"/><circle cx="119.5" cy="23.8" r="1.8" fill="#a0845f"/><circle cx="119.5" cy="23.8" r=".8" fill="#5c4a35" opacity=".5"/><circle cx="124.1" cy="23.8" r="1.8" fill="#a0845f"/><circle cx="124.1" cy="23.8" r=".8" fill="#5c4a35" opacity=".5"/><circle cx="128.8" cy="23.8" r="1.8" fill="#a0845f"/><circle cx="128.8" cy="23.8" r=".8" fill="#5c4a35" opacity=".5"/><circle cx="77.6" cy="12" r="1.9" fill="#a0845f"/><circle cx="135.7" cy="15.8" r="1.9" fill="#a0845f" opacity=".9"/><circle cx="79.8" cy="19" r="1.8" fill="#a0845f" opacity=".6"/><circle cx="133.5" cy="24.9" r="1.9" fill="#a0845f" opacity=".6"/><rect x="79" y="24.2" width="5" height="3" rx=".8" fill="#a0845f"/><polygon points="141.7,32 161,1 206,1 206,47 191,66 166,49" fill="#3a3225" opacity=".3" filter="url(#s4)"/><polygon points="141.7,31.1 160.9,0 186,0 192.9,6.2 166.2,47.1" fill="#ebe8c9"/><polygon points="192.9,6.2 206,14.2 206,45.3 191,64 166.2,47.1" fill="#e6e4c3"/><polygon points="192.9,6.2 194.6,7.3 167.8,48.2 166.2,47.1" fill="#efedd0" opacity=".5"/><line x1="192.9" y1="6.2" x2="166.2" y2="47.1" stroke="#c9c6a3" stroke-width=".5"/><line x1="187.2" y1="73" x2="207" y2="56.8" stroke="#7d6756" stroke-width="2.6" stroke-linecap="round"/><polygon points="184,88 176,96 195,113 204,103" fill="#3a3225" opacity=".3" filter="url(#s4)"/><polygon points="183.4,86.7 174.8,95.1 194.6,111.6 203,102.2" fill="#c59b5a"/><polygon points="183.4,86.7 174.8,95.1 176.6,96.6 185.2,88.2" fill="#ddb97a"/><g transform="translate(186.8,95.2) rotate(40)" fill="#7a5a22" opacity=".7"><rect x="0" y="-1.6" width="4.2" height="1.1"/><rect x="5.2" y="-1.6" width="4.6" height="1.1"/></g><ellipse cx="17" cy="66" rx="14" ry="9" fill="#2a2018" opacity=".35" filter="url(#s4)" transform="rotate(18 17 66)"/><ellipse cx="16.2" cy="64.7" rx="14" ry="9.4" fill="#43342a" transform="rotate(17 16.2 64.7)"/><g transform="rotate(17 16.2 64.7)"><path d="M9.5 58.3 L10.9 56.7 L12.2 58.3 Z" fill="#8f745d" opacity="0.85"/><path d="M12.6 58.3 L14.0 56.7 L15.3 58.3 Z" fill="#8f745d" opacity="0.85"/><path d="M15.7 58.3 L17.1 56.7 L18.4 58.3 Z" fill="#8f745d" opacity="0.85"/><path d="M18.8 58.3 L20.2 56.7 L21.5 58.3 Z" fill="#8f745d" opacity="0.85"/><path d="M21.9 58.3 L23.3 56.7 L24.6 58.3 Z" fill="#8f745d" opacity="0.85"/><path d="M5.1 60.6 L6.5 59.0 L7.8 60.6 Z" fill="#8f745d" opacity="0.75"/><path d="M8.2 60.6 L9.6 59.0 L10.9 60.6 Z" fill="#8f745d" opacity="0.75"/><path d="M11.3 60.6 L12.7 59.0 L14.0 60.6 Z" fill="#8f745d" opacity="0.75"/><path d="M14.4 60.6 L15.8 59.0 L17.1 60.6 Z" fill="#8f745d" opacity="0.75"/><path d="M17.5 60.6 L18.9 59.0 L20.2 60.6 Z" fill="#8f745d" opacity="0.75"/><path d="M20.6 60.6 L22.0 59.0 L23.3 60.6 Z" fill="#8f745d" opacity="0.75"/><path d="M23.7 60.6 L25.1 59.0 L26.4 60.6 Z" fill="#8f745d" opacity="0.75"/><path d="M5.2 63.0 L6.6 61.4 L7.9 63.0 Z" fill="#8f745d" opacity="0.65"/><path d="M8.3 63.0 L9.7 61.4 L11.0 63.0 Z" fill="#8f745d" opacity="0.65"/><path d="M11.4 63.0 L12.8 61.4 L14.1 63.0 Z" fill="#8f745d" opacity="0.65"/><path d="M14.5 63.0 L15.9 61.4 L17.2 63.0 Z" fill="#8f745d" opacity="0.65"/><path d="M17.6 63.0 L19.0 61.4 L20.3 63.0 Z" fill="#8f745d" opacity="0.65"/><path d="M20.7 63.0 L22.1 61.4 L23.4 63.0 Z" fill="#8f745d" opacity="0.65"/><path d="M23.8 63.0 L25.2 61.4 L26.5 63.0 Z" fill="#8f745d" opacity="0.65"/><path d="M3.2 65.3 L4.6 63.7 L5.9 65.3 Z" fill="#8f745d" opacity="0.55"/><path d="M6.3 65.3 L7.7 63.7 L9.0 65.3 Z" fill="#8f745d" opacity="0.55"/><path d="M9.5 65.3 L10.8 63.7 L12.2 65.3 Z" fill="#8f745d" opacity="0.55"/><path d="M12.6 65.3 L13.9 63.7 L15.2 65.3 Z" fill="#8f745d" opacity="0.55"/><path d="M15.7 65.3 L17.0 63.7 L18.4 65.3 Z" fill="#8f745d" opacity="0.55"/><path d="M18.8 65.3 L20.1 63.7 L21.5 65.3 Z" fill="#8f745d" opacity="0.55"/><path d="M21.9 65.3 L23.2 63.7 L24.6 65.3 Z" fill="#8f745d" opacity="0.55"/><path d="M24.9 65.3 L26.3 63.7 L27.6 65.3 Z" fill="#8f745d" opacity="0.55"/><path d="M5.2 67.6 L6.6 66.0 L7.9 67.6 Z" fill="#8f745d" opacity="0.45"/><path d="M8.3 67.6 L9.7 66.0 L11.0 67.6 Z" fill="#8f745d" opacity="0.45"/><path d="M11.4 67.6 L12.8 66.0 L14.1 67.6 Z" fill="#8f745d" opacity="0.45"/><path d="M14.5 67.6 L15.9 66.0 L17.2 67.6 Z" fill="#8f745d" opacity="0.45"/><path d="M17.6 67.6 L19.0 66.0 L20.3 67.6 Z" fill="#8f745d" opacity="0.45"/><path d="M20.7 67.6 L22.1 66.0 L23.4 67.6 Z" fill="#8f745d" opacity="0.45"/><path d="M23.8 67.6 L25.2 66.0 L26.5 67.6 Z" fill="#8f745d" opacity="0.45"/><path d="M5.1 70.0 L6.5 68.4 L7.8 70.0 Z" fill="#8f745d" opacity="0.35"/><path d="M8.2 70.0 L9.6 68.4 L10.9 70.0 Z" fill="#8f745d" opacity="0.35"/><path d="M11.3 70.0 L12.7 68.4 L14.0 70.0 Z" fill="#8f745d" opacity="0.35"/><path d="M14.4 70.0 L15.8 68.4 L17.1 70.0 Z" fill="#8f745d" opacity="0.35"/><path d="M17.5 70.0 L18.9 68.4 L20.2 70.0 Z" fill="#8f745d" opacity="0.35"/><path d="M20.6 70.0 L22.0 68.4 L23.3 70.0 Z" fill="#8f745d" opacity="0.35"/><path d="M23.7 70.0 L25.1 68.4 L26.4 70.0 Z" fill="#8f745d" opacity="0.35"/><path d="M9.5 72.3 L10.9 70.8 L12.2 72.3 Z" fill="#8f745d" opacity="0.25"/><path d="M12.6 72.3 L14.0 70.8 L15.3 72.3 Z" fill="#8f745d" opacity="0.25"/><path d="M15.7 72.3 L17.1 70.8 L18.4 72.3 Z" fill="#8f745d" opacity="0.25"/><path d="M18.8 72.3 L20.2 70.8 L21.5 72.3 Z" fill="#8f745d" opacity="0.25"/><path d="M21.9 72.3 L23.3 70.8 L24.6 72.3 Z" fill="#8f745d" opacity="0.25"/></g><polygon points="12.1,102.8 40.6,83.7 43.1,84.6 43.3,88 15.2,105.5 12.6,105.2" fill="#1c2327"/><g fill="none" stroke="#1c2327" stroke-linejoin="round"><path d="M31.2 93 Q31.4 97.6 35.5 97.7 L40 97.1 Q43.9 95.8 43.6 88" stroke-width="1.45"/><path d="M16.4 104 Q17.4 108 21.6 108 Q27.4 106.8 28.4 102.4 L28.5 96.5" stroke-width="1.45"/><path d="M13.2 104.5 L17.6 112" stroke-width="1.3" opacity=".75"/></g><polygon points="58.2,99.1 76.9,107.1 76.4,113 52.4,113" fill="#e7e4c6"/></g></svg>
  <h2>Building Responsive Layouts</h2>
  <p style="top:164.2px">Responsive design is crucial for modern web development......</p>
  <div class="tag" style="top:201.3px">CSS</div>
</div>
<div class="card" style="left:497px;top:337px;height:231px">
  <svg class="img" width="206" height="112" viewBox="0 0 206 112" preserveAspectRatio="none" aria-hidden="true"><filter id="g5" x="0" y="0" width="100%" height="100%" color-interpolation-filters="sRGB"><feTurbulence type="fractalNoise" baseFrequency="0.7 0.05" numOctaves="3" seed="4" result="n"/><feColorMatrix in="n" type="matrix" values="0 0 0 0 0.62  0 0 0 0 0.51  0 0 0 0 0.38  0.8 0.8 0 0 -0.66"/></filter><filter id="h5" x="0" y="0" width="100%" height="100%" color-interpolation-filters="sRGB"><feTurbulence type="fractalNoise" baseFrequency="0.6 0.04" numOctaves="3" seed="11" result="n"/><feColorMatrix in="n" type="matrix" values="0 0 0 0 0.33  0 0 0 0 0.27  0 0 0 0 0.21  1.1 1.1 0 0 -1.0"/></filter><filter id="b5" x="-5%" y="-5%" width="110%" height="110%"><feGaussianBlur stdDeviation="0.45"/></filter><filter id="s5" x="-20%" y="-20%" width="140%" height="140%"><feGaussianBlur stdDeviation="1.1"/></filter><filter id="t5" x="-60%" y="-60%" width="220%" height="220%"><feGaussianBlur stdDeviation="3.5"/></filter><g filter="url(#b5)"><rect x="-3.5" y="0" width="25.0" height="112" fill="#ad9e8a"/><rect x="21.3" y="0" width="26.0" height="112" fill="#bba891"/><rect x="47.1" y="0" width="26.5" height="112" fill="#dfd5b6"/><rect x="73.4" y="0" width="25.1" height="112" fill="#dacfb1"/><rect x="98.3" y="0" width="25.1" height="112" fill="#ddd2b4"/><rect x="123.2" y="0" width="25.0" height="112" fill="#ded4b5"/><rect x="148" y="0" width="24.6" height="112" fill="#e0d6b9"/><rect x="172.4" y="0" width="24.2" height="112" fill="#d2c6ab"/><rect x="196.4" y="0" width="24.8" height="112" fill="#c6b8a1"/><rect x="1" y="0" width="2.2" height="112" fill="#857563" opacity="0.4"/><rect x="11" y="0" width="1.5" height="112" fill="#7f6f5e" opacity="0.35"/><rect x="19" y="0" width="1.5" height="112" fill="#85745f" opacity="0.3"/><rect x="5" y="30" width="2" height="82" fill="#b3a48f" opacity="0.35"/><rect x="8" y="40" width="3" height="72" fill="#8f7b66" opacity="0.3"/><rect x="14" y="0" width="2" height="60" fill="#b5a691" opacity="0.35"/><rect x="17" y="50" width="2.5" height="62" fill="#93826e" opacity="0.3"/><rect x="21.5" y="40" width="8" height="72" fill="#a08e78" opacity="0.45"/><rect x="24" y="0" width="2.5" height="112" fill="#a99780" opacity="0.4"/><rect x="31" y="30" width="2.5" height="82" fill="#c9bba1" opacity="0.4"/><rect x="36" y="0" width="2" height="112" fill="#c5b69d" opacity="0.4"/><rect x="41" y="0" width="3" height="112" fill="#b39e86" opacity="0.4"/><rect x="53" y="0" width="4" height="112" fill="#e3dabf" opacity="0.5"/><rect x="61" y="0" width="2.5" height="112" fill="#cdb99e" opacity="0.4"/><rect x="67" y="20" width="2" height="92" fill="#e3dbc0" opacity="0.4"/><rect x="79" y="30" width="3" height="82" fill="#ccb9a0" opacity="0.4"/><rect x="87" y="0" width="3.5" height="112" fill="#e0d7bc" opacity="0.45"/><rect x="104" y="34" width="3" height="78" fill="#cfbda3" opacity="0.35"/><rect x="111" y="34" width="3" height="78" fill="#e1d8be" opacity="0.4"/><rect x="129" y="34" width="3" height="78" fill="#cfbea4" opacity="0.35"/><rect x="137" y="0" width="3" height="112" fill="#e2d9c0" opacity="0.4"/><rect x="154" y="40" width="3" height="72" fill="#cfbfa6" opacity="0.3"/><rect x="162" y="50" width="3" height="62" fill="#e2dac2" opacity="0.35"/><rect x="179" y="60" width="3" height="52" fill="#c5b69f" opacity="0.35"/><rect x="187" y="70" width="2.5" height="42" fill="#dcd2ba" opacity="0.35"/><rect x="199" y="50" width="3" height="62" fill="#bbad98" opacity="0.4"/><linearGradient id="d5" x1="0" y1="0" x2="0" y2="1"><stop offset="0" stop-color="#6b5a49" stop-opacity=".04"/><stop offset="1" stop-color="#6b5a49" stop-opacity=".26"/></linearGradient><rect x="0" y="0" width="30" height="112" fill="url(#d5)"/><rect x="30" y="0" width="17" height="112" fill="url(#d5)" opacity=".5"/><ellipse cx="4" cy="106" rx="9" ry="20" fill="#40392e" opacity=".85" filter="url(#t5)"/><ellipse cx="13" cy="92.5" rx="6" ry="4.5" fill="#b08a55" opacity=".6" filter="url(#s5)"/><ellipse cx="1" cy="70" rx="4" ry="40" fill="#5f5247" opacity=".5" filter="url(#t5)"/><linearGradient id="w5" x1="0" y1="0" x2="0" y2="1"><stop offset="0" stop-color="#bf9b6c" stop-opacity=".45"/><stop offset="1" stop-color="#bf9b6c" stop-opacity="0"/></linearGradient><rect x="72" y="28" width="72" height="30" fill="url(#w5)" filter="url(#s5)"/><rect x="0" y="0" width="206" height="112" filter="url(#g5)"/><rect x="0" y="0" width="47" height="112" filter="url(#h5)"/><rect x="21.00" y="0" width="0.6" height="112" fill="#3d4942" opacity="0.4"/><rect x="29.05" y="0" width="0.5" height="112" fill="#3d4942" opacity="0.25"/><rect x="46.80" y="0" width="0.6" height="112" fill="#3d4942" opacity="0.85"/><rect x="73.10" y="0" width="0.6" height="112" fill="#3d4942" opacity="0.9"/><rect x="98.00" y="0" width="0.6" height="112" fill="#3d4942" opacity="0.9"/><rect x="122.90" y="0" width="0.6" height="112" fill="#3d4942" opacity="0.85"/><rect x="148.10" y="0" width="0.6" height="112" fill="#3d4942" opacity="0.7"/><rect x="172.10" y="0" width="0.6" height="112" fill="#3d4942" opacity="0.9"/><rect x="196.10" y="0" width="0.6" height="112" fill="#3d4942" opacity="0.7"/><path d="M13.3 24 Q16.5 40 16 55" fill="none" stroke="#343a31" stroke-width="1" opacity=".95"/><path d="M21.8 38 Q21.5 48 19 57" fill="none" stroke="#343a31" stroke-width="1" opacity=".9"/><polygon points="5,11 19,2 39,1 60,31 32,50" fill="#3a3225" opacity=".35" filter="url(#s5)"/><polygon points="37.2,0 41.2,0 60.2,29 57,31.2" fill="#5b5645"/><polygon points="37.2,0 40.4,0 59.4,29 57,31" fill="#c8b88e"/><polygon points="3.4,8.9 17.3,0 37.6,0 57.2,30.8 30.7,48.4" fill="#2c4037"/><polygon points="8,9.5 18,3 36,3 53,29.5 31.5,43.5" fill="#32473d" opacity=".7"/><rect x="72.5" y="-2" width="71" height="37.5" rx="2.5" fill="#2a2f28" opacity=".4" filter="url(#s5)"/><rect x="73" y="-4" width="69.7" height="37.6" rx="3" fill="#2b4843"/><rect x="73" y="-3" width="69.7" height="7" fill="#2b4a44"/><rect x="74" y="4" width="67.7" height="1" fill="#223833"/><rect x="74.5" y="27.3" width="66.4" height="5.4" rx="1.2" fill="#31564e"/><path d="M76.5 5.6 H138.8 V14 L136.6 27.6 H78.6 L76.5 14 Z" fill="#1f2a27"/><rect x="90.8" y="27.1" width="32.6" height="3.6" rx=".6" fill="#b48f65"/><circle cx="80.7" cy="8.9" r="1.8" fill="#a0845f"/><circle cx="80.7" cy="8.9" r=".8" fill="#5c4a35" opacity=".5"/><circle cx="85.5" cy="8.9" r="1.8" fill="#a0845f"/><circle cx="85.5" cy="8.9" r=".8" fill="#5c4a35" opacity=".5"/><circle cx="90.3" cy="8.9" r="1.8" fill="#a0845f"/><circle cx="90.3" cy="8.9" r=".8" fill="#5c4a35" opacity=".5"/><circle cx="95.1" cy="8.9" r="1.8" fill="#a0845f"/><circle cx="95.1" cy="8.9" r=".8" fill="#5c4a35" opacity=".5"/><circle cx="99.9" cy="8.9" r="1.8" fill="#a0845f"/><circle cx="99.9" cy="8.9" r=".8" fill="#5c4a35" opacity=".5"/><circle cx="104.7" cy="8.9" r="1.8" fill="#a0845f"/><circle cx="104.7" cy="8.9" r=".8" fill="#5c4a35" opacity=".5"/><circle cx="109.4" cy="8.9" r="1.8" fill="#a0845f"/><circle cx="109.4" cy="8.9" r=".8" fill="#5c4a35" opacity=".5"/><circle cx="114.2" cy="8.9" r="1.8" fill="#a0845f"/><circle cx="114.2" cy="8.9" r=".8" fill="#5c4a35" opacity=".5"/><circle cx="119.0" cy="8.9" r="1.8" fill="#a0845f"/><circle cx="119.0" cy="8.9" r=".8" fill="#5c4a35" opacity=".5"/><circle cx="123.8" cy="8.9" r="1.8" fill="#a0845f"/><circle cx="123.8" cy="8.9" r=".8" fill="#5c4a35" opacity=".5"/><circle cx="128.6" cy="8.9" r="1.8" fill="#a0845f"/><circle cx="128.6" cy="8.9" r=".8" fill="#5c4a35" opacity=".5"/><circle cx="133.4" cy="8.9" r="1.8" fill="#a0845f"/><circle cx="133.4" cy="8.9" r=".8" fill="#5c4a35" opacity=".5"/><circle cx="138.2" cy="8.9" r="1.8" fill="#a0845f"/><circle cx="138.2" cy="8.9" r=".8" fill="#5c4a35" opacity=".5"/><circle cx="83.1" cy="13.8" r="1.8" fill="#a0845f"/><circle cx="83.1" cy="13.8" r=".8" fill="#5c4a35" opacity=".5"/><circle cx="87.9" cy="13.8" r="1.8" fill="#a0845f"/><circle cx="87.9" cy="13.8" r=".8" fill="#5c4a35" opacity=".5"/><circle cx="92.7" cy="13.8" r="1.8" fill="#a0845f"/><circle cx="92.7" cy="13.8" r=".8" fill="#5c4a35" opacity=".5"/><circle cx="97.5" cy="13.8" r="1.8" fill="#a0845f"/><circle cx="97.5" cy="13.8" r=".8" fill="#5c4a35" opacity=".5"/><circle cx="102.3" cy="13.8" r="1.8" fill="#a0845f"/><circle cx="102.3" cy="13.8" r=".8" fill="#5c4a35" opacity=".5"/><circle cx="107.0" cy="13.8" r="1.8" fill="#a0845f"/><circle cx="107.0" cy="13.8" r=".8" fill="#5c4a35" opacity=".5"/><circle cx="111.8" cy="13.8" r="1.8" fill="#a0845f"/><circle cx="111.8" cy="13.8" r=".8" fill="#5c4a35" opacity=".5"/><circle cx="116.6" cy="13.8" r="1.8" fill="#a0845f"/><circle cx="116.6" cy="13.8" r=".8" fill="#5c4a35" opacity=".5"/><circle cx="121.4" cy="13.8" r="1.8" fill="#a0845f"/><circle cx="121.4" cy="13.8" r=".8" fill="#5c4a35" opacity=".5"/><circle cx="126.2" cy="13.8" r="1.8" fill="#a0845f"/><circle cx="126.2" cy="13.8" r=".8" fill="#5c4a35" opacity=".5"/><circle cx="131.0" cy="13.8" r="1.8" fill="#a0845f"/><circle cx="131.0" cy="13.8" r=".8" fill="#5c4a35" opacity=".5"/><circle cx="84.4" cy="18.9" r="1.8" fill="#a0845f"/><circle cx="84.4" cy="18.9" r=".8" fill="#5c4a35" opacity=".5"/><circle cx="89.1" cy="18.9" r="1.8" fill="#a0845f"/><circle cx="89.1" cy="18.9" r=".8" fill="#5c4a35" opacity=".5"/><circle cx="93.8" cy="18.9" r="1.8" fill="#a0845f"/><circle cx="93.8" cy="18.9" r=".8" fill="#5c4a35" opacity=".5"/><circle cx="98.5" cy="18.9" r="1.8" fill="#a0845f"/><circle cx="98.5" cy="18.9" r=".8" fill="#5c4a35" opacity=".5"/><circle cx="103.2" cy="18.9" r="1.8" fill="#a0845f"/><circle cx="103.2" cy="18.9" r=".8" fill="#5c4a35" opacity=".5"/><circle cx="107.9" cy="18.9" r="1.8" fill="#a0845f"/><circle cx="107.9" cy="18.9" r=".8" fill="#5c4a35" opacity=".5"/><circle cx="112.6" cy="18.9" r="1.8" fill="#a0845f"/><circle cx="112.6" cy="18.9" r=".8" fill="#5c4a35" opacity=".5"/><circle cx="117.3" cy="18.9" r="1.8" fill="#a0845f"/><circle cx="117.3" cy="18.9" r=".8" fill="#5c4a35" opacity=".5"/><circle cx="122.0" cy="18.9" r="1.8" fill="#a0845f"/><circle cx="122.0" cy="18.9" r=".8" fill="#5c4a35" opacity=".5"/><circle cx="126.7" cy="18.9" r="1.8" fill="#a0845f"/><circle cx="126.7" cy="18.9" r=".8" fill="#5c4a35" opacity=".5"/><circle cx="131.4" cy="18.9" r="1.8" fill="#a0845f"/><circle cx="131.4" cy="18.9" r=".8" fill="#5c4a35" opacity=".5"/><circle cx="86.7" cy="23.8" r="1.8" fill="#a0845f"/><circle cx="86.7" cy="23.8" r=".8" fill="#5c4a35" opacity=".5"/><circle cx="91.4" cy="23.8" r="1.8" fill="#a0845f"/><circle cx="91.4" cy="23.8" r=".8" fill="#5c4a35" opacity=".5"/><circle cx="96.1" cy="23.8" r="1.8" fill="#a0845f"/><circle cx="96.1" cy="23.8" r=".8" fill="#5c4a35" opacity=".5"/><circle cx="100.7" cy="23.8" r="1.8" fill="#a0845f"/><circle cx="100.7" cy="23.8" r=".8" fill="#5c4a35" opacity=".5"/><circle cx="105.4" cy="23.8" r="1.8" fill="#a0845f"/><circle cx="105.4" cy="23.8" r=".8" fill="#5c4a35" opacity=".5"/><circle cx="110.1" cy="23.8" r="1.8" fill="#a0845f"/><circle cx="110.1" cy="23.8" r=".8" fill="#5c4a35" opacity=".5"/><circle cx="114.8" cy="23.8" r="1.8" fill="#a0845f"/><circle cx="114.8" cy="23.8" r=".8" fill="#5c4a35" opacity=".5"/><circle cx="119.5" cy="23.8" r="1.8" fill="#a0845f"/><circle cx="119.5" cy="23.8" r=".8" fill="#5c4a35" opacity=".5"/><circle cx="124.1" cy="23.8" r="1.8" fill="#a0845f"/><circle cx="124.1" cy="23.8" r=".8" fill="#5c4a35" opacity=".5"/><circle cx="128.8" cy="23.8" r="1.8" fill="#a0845f"/><circle cx="128.8" cy="23.8" r=".8" fill="#5c4a35" opacity=".5"/><circle cx="77.6" cy="12" r="1.9" fill="#a0845f"/><circle cx="135.7" cy="15.8" r="1.9" fill="#a0845f" opacity=".9"/><circle cx="79.8" cy="19" r="1.8" fill="#a0845f" opacity=".6"/><circle cx="133.5" cy="24.9" r="1.9" fill="#a0845f" opacity=".6"/><rect x="79" y="24.2" width="5" height="3" rx=".8" fill="#a0845f"/><polygon points="141.7,32 161,1 206,1 206,47 191,66 166,49" fill="#3a3225" opacity=".3" filter="url(#s5)"/><polygon points="141.7,31.1 160.9,0 186,0 192.9,6.2 166.2,47.1" fill="#ebe8c9"/><polygon points="192.9,6.2 206,14.2 206,45.3 191,64 166.2,47.1" fill="#e6e4c3"/><polygon points="192.9,6.2 194.6,7.3 167.8,48.2 166.2,47.1" fill="#efedd0" opacity=".5"/><line x1="192.9" y1="6.2" x2="166.2" y2="47.1" stroke="#c9c6a3" stroke-width=".5"/><line x1="187.2" y1="73" x2="207" y2="56.8" stroke="#7d6756" stroke-width="2.6" stroke-linecap="round"/><polygon points="184,88 176,96 195,113 204,103" fill="#3a3225" opacity=".3" filter="url(#s5)"/><polygon points="183.4,86.7 174.8,95.1 194.6,111.6 203,102.2" fill="#c59b5a"/><polygon points="183.4,86.7 174.8,95.1 176.6,96.6 185.2,88.2" fill="#ddb97a"/><g transform="translate(186.8,95.2) rotate(40)" fill="#7a5a22" opacity=".7"><rect x="0" y="-1.6" width="4.2" height="1.1"/><rect x="5.2" y="-1.6" width="4.6" height="1.1"/></g><ellipse cx="17" cy="66" rx="14" ry="9" fill="#2a2018" opacity=".35" filter="url(#s5)" transform="rotate(18 17 66)"/><ellipse cx="16.2" cy="64.7" rx="14" ry="9.4" fill="#43342a" transform="rotate(17 16.2 64.7)"/><g transform="rotate(17 16.2 64.7)"><path d="M9.5 58.3 L10.9 56.7 L12.2 58.3 Z" fill="#8f745d" opacity="0.85"/><path d="M12.6 58.3 L14.0 56.7 L15.3 58.3 Z" fill="#8f745d" opacity="0.85"/><path d="M15.7 58.3 L17.1 56.7 L18.4 58.3 Z" fill="#8f745d" opacity="0.85"/><path d="M18.8 58.3 L20.2 56.7 L21.5 58.3 Z" fill="#8f745d" opacity="0.85"/><path d="M21.9 58.3 L23.3 56.7 L24.6 58.3 Z" fill="#8f745d" opacity="0.85"/><path d="M5.1 60.6 L6.5 59.0 L7.8 60.6 Z" fill="#8f745d" opacity="0.75"/><path d="M8.2 60.6 L9.6 59.0 L10.9 60.6 Z" fill="#8f745d" opacity="0.75"/><path d="M11.3 60.6 L12.7 59.0 L14.0 60.6 Z" fill="#8f745d" opacity="0.75"/><path d="M14.4 60.6 L15.8 59.0 L17.1 60.6 Z" fill="#8f745d" opacity="0.75"/><path d="M17.5 60.6 L18.9 59.0 L20.2 60.6 Z" fill="#8f745d" opacity="0.75"/><path d="M20.6 60.6 L22.0 59.0 L23.3 60.6 Z" fill="#8f745d" opacity="0.75"/><path d="M23.7 60.6 L25.1 59.0 L26.4 60.6 Z" fill="#8f745d" opacity="0.75"/><path d="M5.2 63.0 L6.6 61.4 L7.9 63.0 Z" fill="#8f745d" opacity="0.65"/><path d="M8.3 63.0 L9.7 61.4 L11.0 63.0 Z" fill="#8f745d" opacity="0.65"/><path d="M11.4 63.0 L12.8 61.4 L14.1 63.0 Z" fill="#8f745d" opacity="0.65"/><path d="M14.5 63.0 L15.9 61.4 L17.2 63.0 Z" fill="#8f745d" opacity="0.65"/><path d="M17.6 63.0 L19.0 61.4 L20.3 63.0 Z" fill="#8f745d" opacity="0.65"/><path d="M20.7 63.0 L22.1 61.4 L23.4 63.0 Z" fill="#8f745d" opacity="0.65"/><path d="M23.8 63.0 L25.2 61.4 L26.5 63.0 Z" fill="#8f745d" opacity="0.65"/><path d="M3.2 65.3 L4.6 63.7 L5.9 65.3 Z" fill="#8f745d" opacity="0.55"/><path d="M6.3 65.3 L7.7 63.7 L9.0 65.3 Z" fill="#8f745d" opacity="0.55"/><path d="M9.5 65.3 L10.8 63.7 L12.2 65.3 Z" fill="#8f745d" opacity="0.55"/><path d="M12.6 65.3 L13.9 63.7 L15.2 65.3 Z" fill="#8f745d" opacity="0.55"/><path d="M15.7 65.3 L17.0 63.7 L18.4 65.3 Z" fill="#8f745d" opacity="0.55"/><path d="M18.8 65.3 L20.1 63.7 L21.5 65.3 Z" fill="#8f745d" opacity="0.55"/><path d="M21.9 65.3 L23.2 63.7 L24.6 65.3 Z" fill="#8f745d" opacity="0.55"/><path d="M24.9 65.3 L26.3 63.7 L27.6 65.3 Z" fill="#8f745d" opacity="0.55"/><path d="M5.2 67.6 L6.6 66.0 L7.9 67.6 Z" fill="#8f745d" opacity="0.45"/><path d="M8.3 67.6 L9.7 66.0 L11.0 67.6 Z" fill="#8f745d" opacity="0.45"/><path d="M11.4 67.6 L12.8 66.0 L14.1 67.6 Z" fill="#8f745d" opacity="0.45"/><path d="M14.5 67.6 L15.9 66.0 L17.2 67.6 Z" fill="#8f745d" opacity="0.45"/><path d="M17.6 67.6 L19.0 66.0 L20.3 67.6 Z" fill="#8f745d" opacity="0.45"/><path d="M20.7 67.6 L22.1 66.0 L23.4 67.6 Z" fill="#8f745d" opacity="0.45"/><path d="M23.8 67.6 L25.2 66.0 L26.5 67.6 Z" fill="#8f745d" opacity="0.45"/><path d="M5.1 70.0 L6.5 68.4 L7.8 70.0 Z" fill="#8f745d" opacity="0.35"/><path d="M8.2 70.0 L9.6 68.4 L10.9 70.0 Z" fill="#8f745d" opacity="0.35"/><path d="M11.3 70.0 L12.7 68.4 L14.0 70.0 Z" fill="#8f745d" opacity="0.35"/><path d="M14.4 70.0 L15.8 68.4 L17.1 70.0 Z" fill="#8f745d" opacity="0.35"/><path d="M17.5 70.0 L18.9 68.4 L20.2 70.0 Z" fill="#8f745d" opacity="0.35"/><path d="M20.6 70.0 L22.0 68.4 L23.3 70.0 Z" fill="#8f745d" opacity="0.35"/><path d="M23.7 70.0 L25.1 68.4 L26.4 70.0 Z" fill="#8f745d" opacity="0.35"/><path d="M9.5 72.3 L10.9 70.8 L12.2 72.3 Z" fill="#8f745d" opacity="0.25"/><path d="M12.6 72.3 L14.0 70.8 L15.3 72.3 Z" fill="#8f745d" opacity="0.25"/><path d="M15.7 72.3 L17.1 70.8 L18.4 72.3 Z" fill="#8f745d" opacity="0.25"/><path d="M18.8 72.3 L20.2 70.8 L21.5 72.3 Z" fill="#8f745d" opacity="0.25"/><path d="M21.9 72.3 L23.3 70.8 L24.6 72.3 Z" fill="#8f745d" opacity="0.25"/></g><polygon points="12.1,102.8 40.6,83.7 43.1,84.6 43.3,88 15.2,105.5 12.6,105.2" fill="#1c2327"/><g fill="none" stroke="#1c2327" stroke-linejoin="round"><path d="M31.2 93 Q31.4 97.6 35.5 97.7 L40 97.1 Q43.9 95.8 43.6 88" stroke-width="1.45"/><path d="M16.4 104 Q17.4 108 21.6 108 Q27.4 106.8 28.4 102.4 L28.5 96.5" stroke-width="1.45"/><path d="M13.2 104.5 L17.6 112" stroke-width="1.3" opacity=".75"/></g><polygon points="58.2,99.1 76.9,107.1 76.4,113 52.4,113" fill="#e7e4c6"/></g></svg>
  <h2>React Hooks Explained</h2>
  <p style="top:147.9px">Hooks are a powerful feature in React......</p>
  <div class="tag" style="top:184.8px">React</div>
</div>
</body>
</html>
